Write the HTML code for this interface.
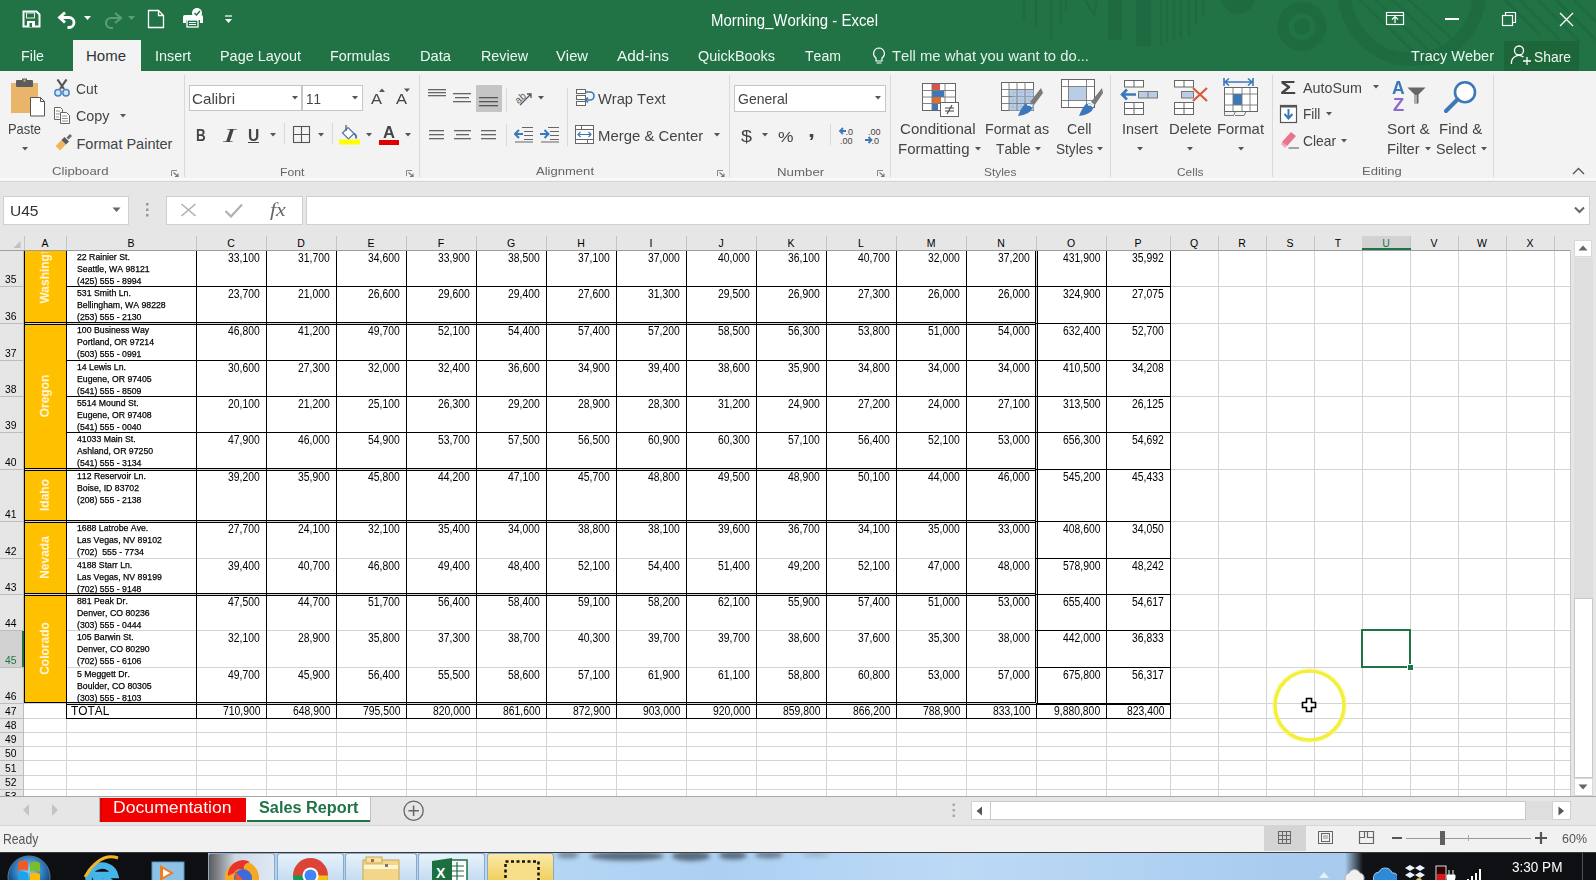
<!DOCTYPE html>
<html><head><meta charset="utf-8"><style>
html,body{margin:0;padding:0;}
body{width:1596px;height:880px;overflow:hidden;position:relative;background:#f3f3f3;font-family:"Liberation Sans", sans-serif;}
body div{position:absolute;}
</style></head><body>
<div style="left:0px;top:0px;width:1596px;height:71px;background:#217346;"></div>
<svg style="position:absolute;left:1000px;top:0px;" width="596" height="71" viewBox="0 0 596 71">
<g stroke="#1f6b41" fill="none">
<path d="M24 0 v19 M36 0 v28 M51 0 v39 M61 0 v24 M66 0 v11" stroke-width="2.2"/>
<path d="M85 0 L94 15 L97 0" stroke-width="2.2"/>
<path d="M161 0 v45 M167 0 v42 M174 0 v40 M181 0 v38 M189 0 v35 M196 0 v25 M203 0 v15" stroke-width="2.5"/>
<circle cx="302" cy="26.5" r="19" stroke-width="11"/>
<circle cx="412" cy="-8" r="67.5" stroke-width="13"/>
<path d="M360 0 L420 58 M372 -4 L436 58 M384 -8 L450 54 M398 -10 L462 48" stroke-width="2.5"/>
<path d="M505 0 L540 35 M520 0 L560 40 M538 0 L580 42 M556 0 L596 40 M574 0 L596 22" stroke-width="3"/>
</g>
<rect x="108" y="0" width="14" height="40" fill="#1f6b41"/>
<rect x="136" y="0" width="15" height="46" fill="#1f6b41"/>
<circle cx="238" cy="-3" r="17" fill="#1f6b41"/>
<circle cx="302" cy="26.5" r="8" fill="#1f6b41"/>
</svg>
<svg style="position:absolute;left:20px;top:9px;" width="22" height="20" viewBox="0 0 22 20"><path d="M3.5 2.5 h13 l3 3 v12 h-16 z" fill="none" stroke="#fff" stroke-width="2"/>
<rect x="6.5" y="4" width="8" height="5" fill="none" stroke="#e8f0ea" stroke-width="1"/>
<rect x="7" y="12" width="8" height="6" fill="#fff"/><rect x="9.5" y="14" width="2.5" height="4" fill="#217346"/></svg>
<svg style="position:absolute;left:56px;top:9px;" width="24" height="20" viewBox="0 0 24 20"><path d="M9 3.5 L3.5 8.5 L9 13.5" fill="none" stroke="#fff" stroke-width="2.8"/>
<path d="M4 8.5 H13 a5 5 0 0 1 0 10 h-1.5" fill="none" stroke="#fff" stroke-width="2.8"/></svg>
<svg style="position:absolute;left:84px;top:16px;" width="8" height="5" viewBox="0 0 8 5"><path d="M0 0 h7 l-3.5 4z" fill="#fff"/></svg>
<svg style="position:absolute;left:101px;top:9px;" width="22" height="20" viewBox="0 0 22 20"><path d="M14 4 L20 9 L14 14" fill="none" stroke="#5d9d78" stroke-width="2.2"/>
<path d="M19.5 9 H10 a5 5 0 0 0 0 10 h2" fill="none" stroke="#5d9d78" stroke-width="2.2"/></svg>
<svg style="position:absolute;left:128px;top:16px;" width="8" height="5" viewBox="0 0 8 5"><path d="M0 0 h7 l-3.5 4z" fill="#5d9d78"/></svg>
<svg style="position:absolute;left:147px;top:9px;" width="19" height="20" viewBox="0 0 19 20"><path d="M1.5 1.5 h10 l5 5 v12 h-15 z M11.5 1.5 v5 h5" fill="none" stroke="#fff" stroke-width="1.3"/></svg>
<svg style="position:absolute;left:182px;top:8px;" width="23" height="20" viewBox="0 0 23 20"><path d="M3 7 h16 a2 2 0 0 1 2 2 v6 h-3 v-3 h-14 v3 h-3 v-6 a2 2 0 0 1 2 -2z" fill="#fff"/>
<rect x="5" y="12" width="11" height="7" fill="none" stroke="#fff" stroke-width="1.3"/>
<path d="M7 14.5 h7 M7 16.5 h7" stroke="#fff" stroke-width="1"/>
<circle cx="15" cy="5" r="5" fill="#fff"/><path d="M12.5 5 l2 2 l3.5 -4" fill="none" stroke="#217346" stroke-width="1.5"/></svg>
<svg style="position:absolute;left:224px;top:15px;" width="9" height="10" viewBox="0 0 9 10"><path d="M1 1 h7" stroke="#fff" stroke-width="1.2"/><path d="M1 4 h7 l-3.5 4z" fill="#fff"/></svg>
<div style="left:711px;top:13.25px;font-size:16px;line-height:1;white-space:pre;color:#fff;font-weight:normal;font-kerning:none;transform:scaleX(0.9344);transform-origin:0 0;">Morning_Working - Excel</div>
<svg style="position:absolute;left:1385px;top:11px;" width="21" height="16" viewBox="0 0 21 16"><rect x="1.5" y="1.5" width="17" height="12" fill="none" stroke="#fff" stroke-width="1.2"/><path d="M1.5 4.5 h17" stroke="#fff"/><path d="M10 12 v-6 M7 8.5 l3 -3 l3 3" fill="none" stroke="#fff" stroke-width="1.2"/></svg>
<div style="left:1445px;top:18px;width:14px;height:1.5px;background:#fff;"></div>
<svg style="position:absolute;left:1501px;top:11px;" width="16" height="16" viewBox="0 0 16 16"><rect x="1.5" y="4.5" width="10" height="10" fill="none" stroke="#fff" stroke-width="1.2"/><path d="M4.5 4.5 v-3 h10 v10 h-3" fill="none" stroke="#fff" stroke-width="1.2"/></svg>
<svg style="position:absolute;left:1559px;top:12px;" width="15" height="15" viewBox="0 0 15 15"><path d="M1 1 L14 14 M14 1 L1 14" stroke="#fff" stroke-width="1.3"/></svg>
<div style="left:73px;top:40px;width:68px;height:31px;background:#f3f3f3;"></div>
<div style="left:21px;top:48.30px;font-size:15px;line-height:1;white-space:pre;color:#eef8f1;font-weight:normal;font-kerning:none;transform:scaleX(0.9516);transform-origin:0 0;">File</div>
<div style="left:86px;top:48.30px;font-size:15px;line-height:1;white-space:pre;color:#333;font-weight:normal;font-kerning:none;">Home</div>
<div style="left:155px;top:48.30px;font-size:15px;line-height:1;white-space:pre;color:#eef8f1;font-weight:normal;font-kerning:none;transform:scaleX(0.9596);transform-origin:0 0;">Insert</div>
<div style="left:220px;top:48.30px;font-size:15px;line-height:1;white-space:pre;color:#eef8f1;font-weight:normal;font-kerning:none;transform:scaleX(0.9616);transform-origin:0 0;">Page Layout</div>
<div style="left:330px;top:48.30px;font-size:15px;line-height:1;white-space:pre;color:#eef8f1;font-weight:normal;font-kerning:none;transform:scaleX(0.9598);transform-origin:0 0;">Formulas</div>
<div style="left:420px;top:48.30px;font-size:15px;line-height:1;white-space:pre;color:#eef8f1;font-weight:normal;font-kerning:none;transform:scaleX(0.9784);transform-origin:0 0;">Data</div>
<div style="left:481px;top:48.30px;font-size:15px;line-height:1;white-space:pre;color:#eef8f1;font-weight:normal;font-kerning:none;transform:scaleX(0.9556);transform-origin:0 0;">Review</div>
<div style="left:556px;top:48.30px;font-size:15px;line-height:1;white-space:pre;color:#eef8f1;font-weight:normal;font-kerning:none;transform:scaleX(0.9842);transform-origin:0 0;">View</div>
<div style="left:617px;top:48.30px;font-size:15px;line-height:1;white-space:pre;color:#eef8f1;font-weight:normal;font-kerning:none;transform:scaleX(1.0224);transform-origin:0 0;">Add-ins</div>
<div style="left:698px;top:48.30px;font-size:15px;line-height:1;white-space:pre;color:#eef8f1;font-weight:normal;font-kerning:none;transform:scaleX(0.9621);transform-origin:0 0;">QuickBooks</div>
<div style="left:805px;top:48.30px;font-size:15px;line-height:1;white-space:pre;color:#eef8f1;font-weight:normal;font-kerning:none;transform:scaleX(0.9389);transform-origin:0 0;">Team</div>
<svg style="position:absolute;left:871px;top:46px;" width="16" height="20" viewBox="0 0 16 20"><path d="M8 2 a5.5 5.5 0 0 0 -3 10 v3 h6 v-3 a5.5 5.5 0 0 0 -3 -10z M5.5 17 h5" fill="none" stroke="#fff" stroke-width="1.2"/></svg>
<div style="left:892px;top:48.30px;font-size:15px;line-height:1;white-space:pre;color:#e4f0e8;font-weight:normal;font-kerning:none;transform:scaleX(0.9886);transform-origin:0 0;">Tell me what you want to do...</div>
<div style="left:1411px;top:48.30px;font-size:15px;line-height:1;white-space:pre;color:#eef8f1;font-weight:normal;font-kerning:none;transform:scaleX(0.9668);transform-origin:0 0;">Tracy Weber</div>
<div style="left:1504px;top:41px;width:75px;height:30px;background:#1d663a;"></div>
<svg style="position:absolute;left:1510px;top:44px;" width="22" height="22" viewBox="0 0 22 22"><circle cx="9" cy="6.5" r="4.5" fill="none" stroke="#fff" stroke-width="1.3"/><path d="M1.5 20 a7.5 7.5 0 0 1 12 -7" fill="none" stroke="#fff" stroke-width="1.3"/><path d="M17 13 v8 M13 17 h8" stroke="#fff" stroke-width="1.3"/></svg>
<div style="left:1534px;top:49.30px;font-size:15px;line-height:1;white-space:pre;color:#eef8f1;font-weight:normal;font-kerning:none;transform:scaleX(0.9244);transform-origin:0 0;">Share</div>
<div style="left:0px;top:71px;width:1596px;height:111px;background:#f3f3f3;"></div>
<div style="left:0px;top:178px;width:1596px;height:2px;background:#fafafa;"></div>
<div style="left:0px;top:181px;width:1596px;height:1px;background:#d6d6d6;"></div>
<svg style="position:absolute;left:9px;top:78px;" width="38" height="40" viewBox="0 0 38 40"><rect x="2" y="5" width="27" height="30" fill="#e9b56a"/>
<rect x="7" y="2" width="17" height="7" fill="#5d5d5d" rx="1"/><rect x="13" y="0.5" width="5" height="3" fill="#5d5d5d"/><rect x="14.5" y="1.5" width="2" height="2" fill="#e9b56a"/>
<path d="M21.5 19.5 h10 l4 4 v14.5 h-14 z" fill="#fff" stroke="#555" stroke-width="1"/><path d="M31.5 19.5 v4 h4" fill="none" stroke="#555"/></svg>
<div style="left:8px;top:121.72px;font-size:14.5px;line-height:1;white-space:pre;color:#444444;font-weight:normal;font-kerning:none;transform:scaleX(0.8900);transform-origin:0 0;">Paste</div>
<svg style="position:absolute;left:22px;top:147px;" width="7" height="4" viewBox="0 0 7 4"><path d="M0 0 h6 l-3.0 3.5z" fill="#555"/></svg>
<svg style="position:absolute;left:53px;top:79px;" width="19" height="19" viewBox="0 0 19 19"><path d="M4.5 0.5 L11 10 M13.5 0.5 L7 10" stroke="#555" stroke-width="2.2" fill="none"/>
<circle cx="5" cy="13.8" r="3.2" fill="#d6e6f5" stroke="#4a86c6" stroke-width="1.5"/><circle cx="13" cy="13.8" r="3.2" fill="#d6e6f5" stroke="#4a86c6" stroke-width="1.5"/></svg>
<div style="left:76px;top:81.72px;font-size:14.5px;line-height:1;white-space:pre;color:#444444;font-weight:normal;font-kerning:none;transform:scaleX(0.9528);transform-origin:0 0;">Cut</div>
<svg style="position:absolute;left:53px;top:106px;" width="19" height="19" viewBox="0 0 19 19"><path d="M1.5 1.5 h6 l2 2 v10 h-8z" fill="#fff" stroke="#666" stroke-width="1"/>
<path d="M7.5 6.5 h6 l3 3 v8 h-9z" fill="#fff" stroke="#666" stroke-width="1"/>
<path d="M3 5h4 M3 8h4 M3 11h3 M9 10h5 M9 12.5h6 M9 15h6" stroke="#777" stroke-width="0.8"/></svg>
<div style="left:76px;top:109.22px;font-size:14.5px;line-height:1;white-space:pre;color:#444444;font-weight:normal;font-kerning:none;transform:scaleX(0.9897);transform-origin:0 0;">Copy</div>
<svg style="position:absolute;left:120px;top:114px;" width="7" height="4" viewBox="0 0 7 4"><path d="M0 0 h6 l-3.0 3.5z" fill="#555"/></svg>
<svg style="position:absolute;left:54px;top:134px;" width="19" height="18" viewBox="0 0 19 18"><path d="M1.5 12 L7.5 6 L12 10.5 L6 16.5z" fill="#f0b65c"/><path d="M7.5 6 L10.5 3 L15 7.5 L12 10.5z" fill="#5a5a5a"/><path d="M12.5 3.5 L16 0 L18 2 L14.5 5.5z" fill="#6a6a6a"/></svg>
<div style="left:76.5px;top:137.22px;font-size:14.5px;line-height:1;white-space:pre;color:#444444;font-weight:normal;font-kerning:none;">Format Painter</div>
<div style="left:51.5px;top:166.26px;font-size:11.5px;line-height:1;white-space:pre;color:#666666;font-weight:normal;font-kerning:none;transform:scaleX(1.1478);transform-origin:0 0;">Clipboard</div>
<svg style="position:absolute;left:171px;top:170px;" width="8" height="7" viewBox="0 0 8 7"><path d="M0.5 6 V0.5 H6" fill="none" stroke="#888" stroke-width="1"/><path d="M2.5 2.5 L6.5 6 M4 6.5 H7 V3.5" fill="none" stroke="#777" stroke-width="1.1"/></svg>
<div style="left:184px;top:75px;width:1px;height:102px;background:#d9d9d9;"></div>
<div style="left:189px;top:85px;width:113px;height:26px;background:#fff;box-sizing:border-box;border:1px solid #c6c6c6;"></div>
<div style="left:302px;top:85px;width:61px;height:26px;background:#fff;box-sizing:border-box;border:1px solid #c6c6c6;"></div>
<div style="left:192px;top:91.72px;font-size:14.5px;line-height:1;white-space:pre;color:#444444;font-weight:normal;font-kerning:none;transform:scaleX(1.0464);transform-origin:0 0;">Calibri</div>
<svg style="position:absolute;left:292px;top:96px;" width="7" height="4" viewBox="0 0 7 4"><path d="M0 0 h6 l-3.0 3.5z" fill="#555"/></svg>
<div style="left:306px;top:91.72px;font-size:14.5px;line-height:1;white-space:pre;color:#444444;font-weight:normal;font-kerning:none;transform:scaleX(0.9300);transform-origin:0 0;">11</div>
<svg style="position:absolute;left:351.5px;top:96px;" width="7" height="4" viewBox="0 0 7 4"><path d="M0 0 h6 l-3.0 3.5z" fill="#555"/></svg>
<div style="left:371px;top:92.15px;font-size:14px;line-height:1;white-space:pre;color:#444444;font-weight:normal;font-kerning:none;transform:scaleX(1.1780);transform-origin:0 0;">A</div>
<svg style="position:absolute;left:379px;top:88px;" width="7" height="5" viewBox="0 0 7 5"><path d="M0 4 h6 l-3 -3.5z" fill="#555"/></svg>
<div style="left:396px;top:92.15px;font-size:14px;line-height:1;white-space:pre;color:#444444;font-weight:normal;font-kerning:none;transform:scaleX(1.1780);transform-origin:0 0;">A</div>
<svg style="position:absolute;left:404px;top:88px;" width="7" height="5" viewBox="0 0 7 5"><path d="M0 0.5 h6 l-3 3.5z" fill="#555"/></svg>
<div style="left:196.3px;top:127.15px;font-size:17.3px;line-height:1;white-space:pre;color:#444;font-weight:bold;font-kerning:none;transform:scaleX(0.7764);transform-origin:0 0;">B</div>
<div style="left:222.5px;top:126.56px;font-size:18px;line-height:1;white-space:pre;color:#444;font-weight:normal;font-kerning:none;transform:scaleX(2.0996);transform-origin:0 0;font-style:italic;font-family:'Liberation Serif',serif;">I</div>
<div style="left:247.5px;top:127.15px;font-size:17.3px;line-height:1;white-space:pre;color:#444;font-weight:bold;font-kerning:none;transform:scaleX(0.9045);transform-origin:0 0;">U</div>
<div style="left:248px;top:142.3px;width:11px;height:1.2px;background:#444;"></div>
<svg style="position:absolute;left:270px;top:133px;" width="7" height="4" viewBox="0 0 7 4"><path d="M0 0 h6 l-3.0 3.5z" fill="#555"/></svg>
<div style="left:284px;top:123px;width:1px;height:21px;background:#d9d9d9;"></div>
<svg style="position:absolute;left:292px;top:125px;" width="19" height="19" viewBox="0 0 19 19"><rect x="1.5" y="1.5" width="16" height="16" fill="none" stroke="#555" stroke-width="1.1"/><path d="M9.5 1.5 v16 M1.5 9.5 h16" stroke="#555" stroke-width="1.1"/></svg>
<svg style="position:absolute;left:318px;top:133px;" width="7" height="4" viewBox="0 0 7 4"><path d="M0 0 h6 l-3.0 3.5z" fill="#555"/></svg>
<div style="left:332px;top:123px;width:1px;height:21px;background:#d9d9d9;"></div>
<svg style="position:absolute;left:338px;top:124px;" width="24" height="22" viewBox="0 0 24 22"><path d="M4.5 9 L10 3.5 L16 9.5 L10.5 15z" fill="#fff" stroke="#4e72b0" stroke-width="1.2"/>
<path d="M8 1 v6" stroke="#555" stroke-width="1.2"/><path d="M16 9.5 q3 2 2 5" fill="none" stroke="#4e72b0" stroke-width="1.8"/>
<rect x="1" y="15.5" width="21" height="5" fill="#ffff00"/></svg>
<svg style="position:absolute;left:366px;top:133px;" width="7" height="4" viewBox="0 0 7 4"><path d="M0 0 h6 l-3.0 3.5z" fill="#555"/></svg>
<div style="left:383px;top:124.95px;font-size:16px;line-height:1;white-space:pre;color:#444;font-weight:bold;font-kerning:none;transform:scaleX(1.0385);transform-origin:0 0;">A</div>
<div style="left:379px;top:140px;width:20px;height:4.5px;background:#e00000;"></div>
<svg style="position:absolute;left:405px;top:133px;" width="7" height="4" viewBox="0 0 7 4"><path d="M0 0 h6 l-3.0 3.5z" fill="#555"/></svg>
<div style="left:280px;top:166.76px;font-size:11.5px;line-height:1;white-space:pre;color:#666666;font-weight:normal;font-kerning:none;transform:scaleX(1.0647);transform-origin:0 0;">Font</div>
<svg style="position:absolute;left:406px;top:170px;" width="8" height="7" viewBox="0 0 8 7"><path d="M0.5 6 V0.5 H6" fill="none" stroke="#888" stroke-width="1"/><path d="M2.5 2.5 L6.5 6 M4 6.5 H7 V3.5" fill="none" stroke="#777" stroke-width="1.1"/></svg>
<div style="left:419px;top:75px;width:1px;height:102px;background:#d9d9d9;"></div>
<svg style="position:absolute;left:428px;top:88px;" width="19" height="10" viewBox="0 0 19 10"><rect x="0" y="1" width="18" height="1.3" fill="#666"/><rect x="0" y="4" width="18" height="1.3" fill="#666"/><rect x="0" y="7" width="18" height="1.3" fill="#666"/></svg>
<svg style="position:absolute;left:453px;top:92px;" width="19" height="12" viewBox="0 0 19 12"><rect x="0" y="1" width="18" height="1.3" fill="#666"/><rect x="2" y="5" width="14" height="1.3" fill="#666"/><rect x="0" y="9" width="18" height="1.3" fill="#666"/></svg>
<div style="left:476px;top:85px;width:26px;height:27px;background:#c5c5c5;"></div>
<svg style="position:absolute;left:479px;top:96px;" width="20" height="12" viewBox="0 0 20 12"><rect x="0" y="1" width="19" height="1.3" fill="#555"/><rect x="0" y="5" width="19" height="1.3" fill="#555"/><rect x="0" y="9" width="19" height="1.3" fill="#555"/></svg>
<div style="left:506px;top:88px;width:1px;height:24px;background:#d9d9d9;"></div>
<svg style="position:absolute;left:513px;top:88px;" width="33" height="19" viewBox="0 0 33 19"><text x="2" y="13" font-size="10" fill="#555" font-family="Liberation Sans" transform="rotate(-40 8 10)">ab</text>
<path d="M7 17 L18 6 M14 6 h4 v4" fill="none" stroke="#555" stroke-width="1.3"/></svg>
<svg style="position:absolute;left:538px;top:96px;" width="7" height="4" viewBox="0 0 7 4"><path d="M0 0 h6 l-3.0 3.5z" fill="#555"/></svg>
<div style="left:567px;top:88px;width:1px;height:58px;background:#d9d9d9;"></div>
<svg style="position:absolute;left:575px;top:88px;" width="21" height="20" viewBox="0 0 21 20"><rect x="1.5" y="1.5" width="9" height="4" fill="#fff" stroke="#666"/><rect x="1.5" y="7.5" width="9" height="4" fill="#fff" stroke="#666"/><rect x="1.5" y="13.5" width="9" height="4" fill="#fff" stroke="#666"/>
<path d="M11 4 h4 a4 4 0 0 1 0 8 h-4" fill="none" stroke="#3c78b9" stroke-width="1.6"/><path d="M13 9.5 l-2.5 2.5 l2.5 2.5" fill="none" stroke="#3c78b9" stroke-width="1.6"/></svg>
<div style="left:598.4px;top:91.72px;font-size:14.5px;line-height:1;white-space:pre;color:#444444;font-weight:normal;font-kerning:none;transform:scaleX(1.0109);transform-origin:0 0;">Wrap Text</div>
<svg style="position:absolute;left:429px;top:129px;" width="16" height="12" viewBox="0 0 16 12"><rect x="0" y="1" width="15" height="1.3" fill="#666"/><rect x="0" y="5" width="15" height="1.3" fill="#666"/><rect x="0" y="9" width="15" height="1.3" fill="#666"/></svg>
<svg style="position:absolute;left:454px;top:129px;" width="18" height="12" viewBox="0 0 18 12"><rect x="0" y="1" width="17" height="1.3" fill="#666"/><rect x="2" y="5" width="13" height="1.3" fill="#666"/><rect x="0" y="9" width="17" height="1.3" fill="#666"/></svg>
<svg style="position:absolute;left:481px;top:129px;" width="16" height="12" viewBox="0 0 16 12"><rect x="0" y="1" width="15" height="1.3" fill="#666"/><rect x="0" y="5" width="15" height="1.3" fill="#666"/><rect x="0" y="9" width="15" height="1.3" fill="#666"/></svg>
<div style="left:506px;top:124px;width:1px;height:22px;background:#d9d9d9;"></div>
<svg style="position:absolute;left:514px;top:126px;" width="20" height="17" viewBox="0 0 20 17"><path d="M8 1.5 h11 M10 5.5 h9 M10 9.5 h9 M10 13.5 h9 M1 16 h18" stroke="#666" stroke-width="1.2"/><path d="M1 8 h8 M5 4 l-4 4 l4 4" fill="none" stroke="#3c78b9" stroke-width="2"/></svg>
<svg style="position:absolute;left:540px;top:126px;" width="20" height="17" viewBox="0 0 20 17"><path d="M8 1.5 h11 M10 5.5 h9 M10 9.5 h9 M10 13.5 h9 M1 16 h18" stroke="#666" stroke-width="1.2"/><path d="M0 8 h8 M4.5 4 l4 4 l-4 4" fill="none" stroke="#3c78b9" stroke-width="2"/></svg>
<svg style="position:absolute;left:574px;top:124px;" width="21" height="21" viewBox="0 0 21 21"><rect x="1.5" y="1.5" width="18" height="18" fill="#fff" stroke="#666"/><path d="M1.5 5.5 h18 M1.5 15.5 h18 M7.5 1.5 v4 M13.5 15.5 v4" stroke="#666"/>
<path d="M4 10.5 h13 M6.5 8 l-2.5 2.5 l2.5 2.5 M14.5 8 l2.5 2.5 l-2.5 2.5" fill="none" stroke="#3c78b9" stroke-width="1.2"/></svg>
<div style="left:598.4px;top:128.72px;font-size:14.5px;line-height:1;white-space:pre;color:#444444;font-weight:normal;font-kerning:none;transform:scaleX(1.0278);transform-origin:0 0;">Merge &amp; Center</div>
<svg style="position:absolute;left:713.5px;top:133px;" width="7" height="4" viewBox="0 0 7 4"><path d="M0 0 h6 l-3.0 3.5z" fill="#555"/></svg>
<div style="left:536px;top:166.46px;font-size:11.5px;line-height:1;white-space:pre;color:#666666;font-weight:normal;font-kerning:none;transform:scaleX(1.1342);transform-origin:0 0;">Alignment</div>
<svg style="position:absolute;left:717px;top:170px;" width="8" height="7" viewBox="0 0 8 7"><path d="M0.5 6 V0.5 H6" fill="none" stroke="#888" stroke-width="1"/><path d="M2.5 2.5 L6.5 6 M4 6.5 H7 V3.5" fill="none" stroke="#777" stroke-width="1.1"/></svg>
<div style="left:729px;top:75px;width:1px;height:102px;background:#d9d9d9;"></div>
<div style="left:734px;top:85px;width:152px;height:27px;background:#fff;box-sizing:border-box;border:1px solid #c6c6c6;"></div>
<div style="left:737.5px;top:91.72px;font-size:14.5px;line-height:1;white-space:pre;color:#444444;font-weight:normal;font-kerning:none;transform:scaleX(0.9654);transform-origin:0 0;">General</div>
<svg style="position:absolute;left:875px;top:96px;" width="7" height="4" viewBox="0 0 7 4"><path d="M0 0 h6 l-3.0 3.5z" fill="#555"/></svg>
<div style="left:741px;top:127.61px;font-size:17px;line-height:1;white-space:pre;color:#444;font-weight:normal;font-kerning:none;transform:scaleX(1.1635);transform-origin:0 0;">$</div>
<svg style="position:absolute;left:762px;top:133px;" width="7" height="4" viewBox="0 0 7 4"><path d="M0 0 h6 l-3.0 3.5z" fill="#555"/></svg>
<div style="left:778px;top:129.30px;font-size:15px;line-height:1;white-space:pre;color:#444;font-weight:normal;font-kerning:none;transform:scaleX(1.1621);transform-origin:0 0;">%</div>
<div style="left:808px;top:120.07px;font-size:20px;line-height:1;white-space:pre;color:#444;font-weight:bold;font-kerning:none;transform:scaleX(1.2598);transform-origin:0 0;">,</div>
<div style="left:829.5px;top:124px;width:1px;height:21px;background:#d9d9d9;"></div>
<svg style="position:absolute;left:838px;top:125px;" width="18" height="20" viewBox="0 0 18 20"><path d="M2 6 h6 M5 3 l-3 3 l3 3" fill="none" stroke="#3c78b9" stroke-width="1.8"/>
<text x="7.5" y="9.5" font-size="9" fill="#444" font-family="Liberation Sans">.0</text><text x="2" y="18.5" font-size="9" fill="#444" font-family="Liberation Sans">.00</text></svg>
<svg style="position:absolute;left:864px;top:125px;" width="18" height="20" viewBox="0 0 18 20"><path d="M1 15 h6 M4.5 12 l3 3 l-3 3" fill="none" stroke="#3c78b9" stroke-width="1.8"/>
<text x="4" y="9.5" font-size="9" fill="#444" font-family="Liberation Sans">.00</text><text x="7.5" y="18.5" font-size="9" fill="#444" font-family="Liberation Sans">.0</text></svg>
<div style="left:776.6px;top:166.96px;font-size:11.5px;line-height:1;white-space:pre;color:#666666;font-weight:normal;font-kerning:none;transform:scaleX(1.1540);transform-origin:0 0;">Number</div>
<svg style="position:absolute;left:877px;top:170px;" width="8" height="7" viewBox="0 0 8 7"><path d="M0.5 6 V0.5 H6" fill="none" stroke="#888" stroke-width="1"/><path d="M2.5 2.5 L6.5 6 M4 6.5 H7 V3.5" fill="none" stroke="#777" stroke-width="1.1"/></svg>
<div style="left:890px;top:75px;width:1px;height:102px;background:#d9d9d9;"></div>
<svg style="position:absolute;left:920px;top:82px;" width="41" height="36" viewBox="0 0 41 36"><g stroke="#666" stroke-width="1" fill="#fff"><rect x="2.5" y="1.5" width="33" height="27"/></g>
<rect x="12" y="2" width="8" height="6.5" fill="#d9534f"/><rect x="12" y="8.5" width="12" height="6.5" fill="#3c78b9"/><rect x="12" y="15" width="9" height="6.5" fill="#e46c2e"/><rect x="12" y="21.5" width="6" height="6.5" fill="#3c78b9"/>
<path d="M12 1.5 v27 M25 1.5 v27 M2.5 8.5 h33 M2.5 15 h33 M2.5 21.5 h33" stroke="#777" stroke-width="0.9"/>
<rect x="20.5" y="20.5" width="18" height="14" fill="#fff" stroke="#666"/>
<path d="M25 26 h9 M25 29 h9 M32 23 l-5 9" stroke="#444" stroke-width="1.1"/></svg>
<div style="left:900.4px;top:122.42px;font-size:14.5px;line-height:1;white-space:pre;color:#444444;font-weight:normal;font-kerning:none;transform:scaleX(1.0420);transform-origin:0 0;">Conditional</div>
<div style="left:897.5px;top:142.22px;font-size:14.5px;line-height:1;white-space:pre;color:#444444;font-weight:normal;font-kerning:none;transform:scaleX(1.0317);transform-origin:0 0;">Formatting</div>
<svg style="position:absolute;left:974.5px;top:147px;" width="7" height="4" viewBox="0 0 7 4"><path d="M0 0 h6 l-3.0 3.5z" fill="#555"/></svg>
<svg style="position:absolute;left:999px;top:80px;" width="45" height="38" viewBox="0 0 45 38"><rect x="2.5" y="2.5" width="32" height="28" fill="#fff" stroke="#666"/>
<rect x="10" y="9.5" width="24.5" height="21" fill="#b9cde6"/>
<path d="M10 2.5 v28 M18 2.5 v28 M26 2.5 v28 M2.5 9.5 h32 M2.5 16.5 h32 M2.5 23.5 h32" stroke="#777" stroke-width="0.9"/>
<path d="M14 16.5 h20 M14 12.5 h20 M22 9.5 v21 M30 9.5 v21 M14 9.5 v21 M10 20 h24.5 M10 27 h24.5" stroke="#9fb5d3" stroke-width="0.6"/>
<path d="M42 8 L31 22 L35 25 L44 13z" fill="#7a7a7a"/>
<path d="M26 24 q6 -2 8 3 q-3 8 -15 9 q3 -8 7 -12z" fill="#3c78b9"/><path d="M28 25 q4 -1 5 2" stroke="#fff" fill="none" stroke-width="1.5"/></svg>
<div style="left:985.4px;top:122.42px;font-size:14.5px;line-height:1;white-space:pre;color:#444444;font-weight:normal;font-kerning:none;transform:scaleX(0.9822);transform-origin:0 0;">Format as</div>
<div style="left:995.5px;top:142.22px;font-size:14.5px;line-height:1;white-space:pre;color:#444444;font-weight:normal;font-kerning:none;transform:scaleX(0.9512);transform-origin:0 0;">Table</div>
<svg style="position:absolute;left:1035px;top:147px;" width="7" height="4" viewBox="0 0 7 4"><path d="M0 0 h6 l-3.0 3.5z" fill="#555"/></svg>
<svg style="position:absolute;left:1059px;top:78px;" width="45" height="40" viewBox="0 0 45 40"><rect x="2.5" y="1.5" width="33" height="28" fill="#fff" stroke="#666"/>
<rect x="9.5" y="8.5" width="18" height="14" fill="#b9cde6"/>
<path d="M9.5 1.5 v28 M27.5 1.5 v28 M2.5 8.5 h33 M2.5 22.5 h33" stroke="#777" stroke-width="0.9"/>
<path d="M43 10 L32 24 L36 27 L44 15z" fill="#7a7a7a"/>
<path d="M27 26 q6 -2 8 3 q-3 8 -15 9 q3 -8 7 -12z" fill="#3c78b9"/><path d="M29 27 q4 -1 5 2" stroke="#fff" fill="none" stroke-width="1.5"/></svg>
<div style="left:1066.8px;top:122.42px;font-size:14.5px;line-height:1;white-space:pre;color:#444444;font-weight:normal;font-kerning:none;transform:scaleX(0.9808);transform-origin:0 0;">Cell</div>
<div style="left:1055.7px;top:142.22px;font-size:14.5px;line-height:1;white-space:pre;color:#444444;font-weight:normal;font-kerning:none;transform:scaleX(0.9396);transform-origin:0 0;">Styles</div>
<svg style="position:absolute;left:1097px;top:147px;" width="7" height="4" viewBox="0 0 7 4"><path d="M0 0 h6 l-3.0 3.5z" fill="#555"/></svg>
<div style="left:984px;top:166.76px;font-size:11.5px;line-height:1;white-space:pre;color:#666666;font-weight:normal;font-kerning:none;transform:scaleX(1.0346);transform-origin:0 0;">Styles</div>
<div style="left:1110px;top:75px;width:1px;height:102px;background:#d9d9d9;"></div>
<svg style="position:absolute;left:1119px;top:78px;" width="40" height="38" viewBox="0 0 40 38"><g fill="#fff" stroke="#666"><rect x="5.5" y="2.5" width="19" height="6.5"/><rect x="5.5" y="24.5" width="19" height="12"/></g>
<path d="M15 2.5 v6.5 M15 24.5 v12 M5.5 30.5 h19" stroke="#666"/>
<rect x="19.5" y="13.5" width="19" height="6.5" fill="#b9cde6" stroke="#777"/><path d="M29 13.5 v6.5" stroke="#777"/>
<path d="M3 16.5 h14 M8 11.5 l-5 5 l5 5" fill="none" stroke="#3c78b9" stroke-width="2.5"/></svg>
<div style="left:1122px;top:122.22px;font-size:14.5px;line-height:1;white-space:pre;color:#444444;font-weight:normal;font-kerning:none;transform:scaleX(0.9927);transform-origin:0 0;">Insert</div>
<svg style="position:absolute;left:1137px;top:147px;" width="7" height="4" viewBox="0 0 7 4"><path d="M0 0 h6 l-3.0 3.5z" fill="#555"/></svg>
<svg style="position:absolute;left:1172px;top:78px;" width="40" height="38" viewBox="0 0 40 38"><g fill="#fff" stroke="#666"><rect x="2.5" y="2.5" width="19" height="6.5"/><rect x="2.5" y="24.5" width="19" height="12"/></g>
<path d="M12 2.5 v6.5 M12 24.5 v12 M2.5 30.5 h19" stroke="#666"/>
<rect x="9.5" y="13.5" width="12" height="6.5" fill="#b9cde6" stroke="#777"/>
<path d="M21 10 L35 23 M35 10 L21 23" stroke="#d9573c" stroke-width="2.2"/></svg>
<div style="left:1168.8px;top:122.22px;font-size:14.5px;line-height:1;white-space:pre;color:#444444;font-weight:normal;font-kerning:none;transform:scaleX(1.0211);transform-origin:0 0;">Delete</div>
<svg style="position:absolute;left:1187px;top:147px;" width="7" height="4" viewBox="0 0 7 4"><path d="M0 0 h6 l-3.0 3.5z" fill="#555"/></svg>
<svg style="position:absolute;left:1222px;top:77px;" width="38" height="40" viewBox="0 0 38 40"><path d="M3 5 h27 M7 1.5 l-4 3.5 l4 3.5 M26 1.5 l4 3.5 l-4 3.5 M2 1 v8 M31 1 v8" fill="none" stroke="#3c78b9" stroke-width="1.6"/>
<rect x="2.5" y="10.5" width="33" height="24" fill="#fff" stroke="#666"/>
<rect x="11" y="17" width="9" height="11" fill="#3c78b9"/>
<path d="M11 10.5 v24 M20 10.5 v24 M28 10.5 v24 M2.5 17 h33 M2.5 28 h33" stroke="#777" stroke-width="0.9"/>
<path d="M2.5 34.5 v4 h9 l2 -4 M13 38.5 h9 l2 -4" fill="none" stroke="#777"/></svg>
<div style="left:1217px;top:122.22px;font-size:14.5px;line-height:1;white-space:pre;color:#444444;font-weight:normal;font-kerning:none;transform:scaleX(1.0235);transform-origin:0 0;">Format</div>
<svg style="position:absolute;left:1237.5px;top:147px;" width="7" height="4" viewBox="0 0 7 4"><path d="M0 0 h6 l-3.0 3.5z" fill="#555"/></svg>
<div style="left:1177px;top:166.66px;font-size:11.5px;line-height:1;white-space:pre;color:#666666;font-weight:normal;font-kerning:none;transform:scaleX(1.0368);transform-origin:0 0;">Cells</div>
<div style="left:1271.5px;top:75px;width:1px;height:102px;background:#d9d9d9;"></div>
<div style="left:1280px;top:78.41px;font-size:19px;line-height:1;white-space:pre;color:#444;font-weight:bold;font-kerning:none;transform:scaleX(1.4033);transform-origin:0 0;">Σ</div>
<div style="left:1303px;top:80.72px;font-size:14.5px;line-height:1;white-space:pre;color:#444444;font-weight:normal;font-kerning:none;transform:scaleX(0.9892);transform-origin:0 0;">AutoSum</div>
<svg style="position:absolute;left:1373px;top:85px;" width="7" height="4" viewBox="0 0 7 4"><path d="M0 0 h6 l-3.0 3.5z" fill="#555"/></svg>
<svg style="position:absolute;left:1279px;top:104px;" width="19" height="20" viewBox="0 0 19 20"><rect x="1.5" y="1.5" width="16" height="17" fill="#fff" stroke="#555" stroke-width="1.2"/><rect x="1.5" y="1.5" width="16" height="2" fill="#555"/>
<path d="M9.5 5 v9 M5.5 10 l4 4.5 l4 -4.5" fill="none" stroke="#3c78b9" stroke-width="2"/></svg>
<div style="left:1303px;top:107.22px;font-size:14.5px;line-height:1;white-space:pre;color:#444444;font-weight:normal;font-kerning:none;transform:scaleX(0.9394);transform-origin:0 0;">Fill</div>
<svg style="position:absolute;left:1325.5px;top:112px;" width="7" height="4" viewBox="0 0 7 4"><path d="M0 0 h6 l-3.0 3.5z" fill="#555"/></svg>
<svg style="position:absolute;left:1280px;top:130px;" width="20" height="20" viewBox="0 0 20 20"><path d="M2 12 L11 2 L16 6 L7 16z" fill="#e8738f"/><path d="M2 12 L7 16 L5 18 L1 14z" fill="#f2a6b8"/><path d="M8.5 18 h10.5" stroke="#555" stroke-width="1"/></svg>
<div style="left:1303px;top:133.92px;font-size:14.5px;line-height:1;white-space:pre;color:#444444;font-weight:normal;font-kerning:none;transform:scaleX(0.9524);transform-origin:0 0;">Clear</div>
<svg style="position:absolute;left:1340.5px;top:139px;" width="7" height="4" viewBox="0 0 7 4"><path d="M0 0 h6 l-3.0 3.5z" fill="#555"/></svg>
<div style="left:1392px;top:79.06px;font-size:18px;line-height:1;white-space:pre;color:#3c78b9;font-weight:bold;font-kerning:none;transform:scaleX(0.9770);transform-origin:0 0;">A</div>
<div style="left:1392.5px;top:96.36px;font-size:18px;line-height:1;white-space:pre;color:#8e6ad0;font-weight:bold;font-kerning:none;transform:scaleX(1.0186);transform-origin:0 0;">Z</div>
<svg style="position:absolute;left:1407px;top:87px;" width="20" height="18" viewBox="0 0 20 18"><path d="M0.5 0.5 h18 l-7 7 v9 h-4 v-9z" fill="#666"/><path d="M9 8 v8" stroke="#f3f3f3" stroke-width="1"/></svg>
<div style="left:1387.4px;top:122.42px;font-size:14.5px;line-height:1;white-space:pre;color:#444444;font-weight:normal;font-kerning:none;transform:scaleX(1.0573);transform-origin:0 0;">Sort &amp;</div>
<div style="left:1387.4px;top:142.22px;font-size:14.5px;line-height:1;white-space:pre;color:#444444;font-weight:normal;font-kerning:none;transform:scaleX(1.0117);transform-origin:0 0;">Filter</div>
<svg style="position:absolute;left:1424.5px;top:147px;" width="7" height="4" viewBox="0 0 7 4"><path d="M0 0 h6 l-3.0 3.5z" fill="#555"/></svg>
<svg style="position:absolute;left:1441px;top:78px;" width="38" height="38" viewBox="0 0 38 38"><circle cx="24" cy="14.2" r="10" fill="#fff" stroke="#3c78b9" stroke-width="2.6"/><path d="M16.5 21.5 L5 33" stroke="#3c78b9" stroke-width="4" stroke-linecap="round"/></svg>
<div style="left:1439.3px;top:122.42px;font-size:14.5px;line-height:1;white-space:pre;color:#444444;font-weight:normal;font-kerning:none;transform:scaleX(1.0309);transform-origin:0 0;">Find &amp;</div>
<div style="left:1436.4px;top:142.22px;font-size:14.5px;line-height:1;white-space:pre;color:#444444;font-weight:normal;font-kerning:none;transform:scaleX(0.9826);transform-origin:0 0;">Select</div>
<svg style="position:absolute;left:1480.5px;top:147px;" width="7" height="4" viewBox="0 0 7 4"><path d="M0 0 h6 l-3.0 3.5z" fill="#555"/></svg>
<div style="left:1362px;top:166.26px;font-size:11.5px;line-height:1;white-space:pre;color:#666666;font-weight:normal;font-kerning:none;transform:scaleX(1.1319);transform-origin:0 0;">Editing</div>
<div style="left:1493px;top:75px;width:1px;height:102px;background:#d9d9d9;"></div>
<svg style="position:absolute;left:1572px;top:167px;" width="13" height="8" viewBox="0 0 13 8"><path d="M1 7 L6.5 1.5 L12 7" fill="none" stroke="#555" stroke-width="1.4"/></svg>
<div style="left:0px;top:182px;width:1596px;height:614px;background:#e6e6e6;"></div>
<div style="left:3px;top:196px;width:126px;height:29px;background:#fff;box-sizing:border-box;border:1px solid #d0d0d0;"></div>
<div style="left:10px;top:203.00px;font-size:15px;line-height:1;white-space:pre;color:#333;font-weight:normal;font-kerning:none;transform:scaleX(1.0357);transform-origin:0 0;">U45</div>
<svg style="position:absolute;left:112px;top:207px;" width="9" height="6" viewBox="0 0 9 6"><path d="M0.5 0.5 h8 l-4 4.5z" fill="#666"/></svg>
<svg style="position:absolute;left:145px;top:202px;" width="5" height="16" viewBox="0 0 5 16"><rect x="1" y="1" width="2.5" height="2.5" fill="#999"/><rect x="1" y="6.5" width="2.5" height="2.5" fill="#999"/><rect x="1" y="12" width="2.5" height="2.5" fill="#999"/></svg>
<div style="left:166px;top:196px;width:137px;height:29px;background:#fff;box-sizing:border-box;border:1px solid #d0d0d0;"></div>
<svg style="position:absolute;left:180px;top:203px;" width="17" height="14" viewBox="0 0 17 14"><path d="M1.5 1 L15.5 13 M15.5 1 L1.5 13" stroke="#b0b0b0" stroke-width="1.6"/></svg>
<svg style="position:absolute;left:224px;top:203px;" width="20" height="15" viewBox="0 0 20 15"><path d="M1.5 8 L7 13.5 L18 1.5" fill="none" stroke="#b0b0b0" stroke-width="2.2"/></svg>
<div style="left:270px;top:200.76px;font-size:18px;line-height:1;white-space:pre;color:#666;font-weight:normal;font-kerning:none;transform:scaleX(1.2142);transform-origin:0 0;font-family:'Liberation Serif',serif;font-style:italic;">fx</div>
<div style="left:306px;top:196px;width:1284px;height:29px;background:#fff;box-sizing:border-box;border:1px solid #d0d0d0;"></div>
<svg style="position:absolute;left:1574px;top:206px;" width="11" height="8" viewBox="0 0 11 8"><path d="M1 1.5 L5.5 6 L10 1.5" fill="none" stroke="#666" stroke-width="2"/></svg>
<div style="left:24px;top:250px;width:1546px;height:546px;background:#fff;"></div>
<div style="left:66px;top:250px;width:1px;height:546px;background:#d4d4d4;"></div>
<div style="left:196px;top:250px;width:1px;height:546px;background:#d4d4d4;"></div>
<div style="left:266px;top:250px;width:1px;height:546px;background:#d4d4d4;"></div>
<div style="left:336px;top:250px;width:1px;height:546px;background:#d4d4d4;"></div>
<div style="left:406px;top:250px;width:1px;height:546px;background:#d4d4d4;"></div>
<div style="left:476px;top:250px;width:1px;height:546px;background:#d4d4d4;"></div>
<div style="left:546px;top:250px;width:1px;height:546px;background:#d4d4d4;"></div>
<div style="left:616px;top:250px;width:1px;height:546px;background:#d4d4d4;"></div>
<div style="left:686px;top:250px;width:1px;height:546px;background:#d4d4d4;"></div>
<div style="left:756px;top:250px;width:1px;height:546px;background:#d4d4d4;"></div>
<div style="left:826px;top:250px;width:1px;height:546px;background:#d4d4d4;"></div>
<div style="left:896px;top:250px;width:1px;height:546px;background:#d4d4d4;"></div>
<div style="left:966px;top:250px;width:1px;height:546px;background:#d4d4d4;"></div>
<div style="left:1036px;top:250px;width:1px;height:546px;background:#d4d4d4;"></div>
<div style="left:1106px;top:250px;width:1px;height:546px;background:#d4d4d4;"></div>
<div style="left:1170px;top:250px;width:1px;height:546px;background:#d4d4d4;"></div>
<div style="left:1218px;top:250px;width:1px;height:546px;background:#d4d4d4;"></div>
<div style="left:1266px;top:250px;width:1px;height:546px;background:#d4d4d4;"></div>
<div style="left:1314px;top:250px;width:1px;height:546px;background:#d4d4d4;"></div>
<div style="left:1362px;top:250px;width:1px;height:546px;background:#d4d4d4;"></div>
<div style="left:1410px;top:250px;width:1px;height:546px;background:#d4d4d4;"></div>
<div style="left:1458px;top:250px;width:1px;height:546px;background:#d4d4d4;"></div>
<div style="left:1506px;top:250px;width:1px;height:546px;background:#d4d4d4;"></div>
<div style="left:1554px;top:250px;width:1px;height:546px;background:#d4d4d4;"></div>
<div style="left:1570px;top:250px;width:1px;height:546px;background:#c8c8c8;"></div>
<div style="left:24px;top:286px;width:1546px;height:1px;background:#d4d4d4;"></div>
<div style="left:24px;top:323px;width:1546px;height:1px;background:#d4d4d4;"></div>
<div style="left:24px;top:360px;width:1546px;height:1px;background:#d4d4d4;"></div>
<div style="left:24px;top:396px;width:1546px;height:1px;background:#d4d4d4;"></div>
<div style="left:24px;top:432px;width:1546px;height:1px;background:#d4d4d4;"></div>
<div style="left:24px;top:469px;width:1546px;height:1px;background:#d4d4d4;"></div>
<div style="left:24px;top:521px;width:1546px;height:1px;background:#d4d4d4;"></div>
<div style="left:24px;top:558px;width:1546px;height:1px;background:#d4d4d4;"></div>
<div style="left:24px;top:594px;width:1546px;height:1px;background:#d4d4d4;"></div>
<div style="left:24px;top:630px;width:1546px;height:1px;background:#d4d4d4;"></div>
<div style="left:24px;top:667px;width:1546px;height:1px;background:#d4d4d4;"></div>
<div style="left:24px;top:703px;width:1546px;height:1px;background:#d4d4d4;"></div>
<div style="left:24px;top:718px;width:1546px;height:1px;background:#d4d4d4;"></div>
<div style="left:24px;top:732px;width:1546px;height:1px;background:#d4d4d4;"></div>
<div style="left:24px;top:746px;width:1546px;height:1px;background:#d4d4d4;"></div>
<div style="left:24px;top:760px;width:1546px;height:1px;background:#d4d4d4;"></div>
<div style="left:24px;top:775px;width:1546px;height:1px;background:#d4d4d4;"></div>
<div style="left:24px;top:789px;width:1546px;height:1px;background:#d4d4d4;"></div>
<div style="left:25px;top:250px;width:41px;height:72px;background:#ffc000;"></div>
<div style="left:25px;top:324px;width:41px;height:144px;background:#ffc000;"></div>
<div style="left:25px;top:470px;width:41px;height:50px;background:#ffc000;"></div>
<div style="left:25px;top:522px;width:41px;height:71px;background:#ffc000;"></div>
<div style="left:25px;top:595px;width:41px;height:107px;background:#ffc000;"></div>
<div style="left:24px;top:250px;width:1012px;height:1px;background:#000;"></div>
<div style="left:24px;top:322px;width:1012px;height:1px;background:#000;"></div>
<div style="left:66px;top:286px;width:970px;height:1px;background:#000;"></div>
<div style="left:24px;top:324px;width:1012px;height:1px;background:#000;"></div>
<div style="left:24px;top:468px;width:1012px;height:1px;background:#000;"></div>
<div style="left:66px;top:360px;width:970px;height:1px;background:#000;"></div>
<div style="left:66px;top:396px;width:970px;height:1px;background:#000;"></div>
<div style="left:66px;top:432px;width:970px;height:1px;background:#000;"></div>
<div style="left:24px;top:470px;width:1012px;height:1px;background:#000;"></div>
<div style="left:24px;top:520px;width:1012px;height:1px;background:#000;"></div>
<div style="left:24px;top:522px;width:1012px;height:1px;background:#000;"></div>
<div style="left:24px;top:593px;width:1012px;height:1px;background:#000;"></div>
<div style="left:66px;top:558px;width:970px;height:1px;background:#d4d4d4;"></div>
<div style="left:24px;top:595px;width:1012px;height:1px;background:#000;"></div>
<div style="left:24px;top:702px;width:1012px;height:1px;background:#000;"></div>
<div style="left:66px;top:630px;width:970px;height:1px;background:#d4d4d4;"></div>
<div style="left:66px;top:667px;width:970px;height:1px;background:#d4d4d4;"></div>
<div style="left:1036px;top:250px;width:135px;height:1px;background:#000;"></div>
<div style="left:1036px;top:286px;width:135px;height:1px;background:#000;"></div>
<div style="left:1036px;top:323px;width:135px;height:1px;background:#000;"></div>
<div style="left:1036px;top:360px;width:135px;height:1px;background:#000;"></div>
<div style="left:1036px;top:396px;width:135px;height:1px;background:#000;"></div>
<div style="left:1036px;top:432px;width:135px;height:1px;background:#000;"></div>
<div style="left:1036px;top:469px;width:135px;height:1px;background:#000;"></div>
<div style="left:1036px;top:521px;width:135px;height:1px;background:#000;"></div>
<div style="left:1036px;top:558px;width:135px;height:1px;background:#000;"></div>
<div style="left:1036px;top:594px;width:135px;height:1px;background:#000;"></div>
<div style="left:1036px;top:630px;width:135px;height:1px;background:#000;"></div>
<div style="left:1036px;top:667px;width:135px;height:1px;background:#000;"></div>
<div style="left:1036px;top:703px;width:135px;height:1px;background:#000;"></div>
<div style="left:1036px;top:718px;width:135px;height:1px;background:#000;"></div>
<div style="left:24px;top:250px;width:1px;height:453px;background:#000;"></div>
<div style="left:66px;top:250px;width:1px;height:468px;background:#000;"></div>
<div style="left:196px;top:250px;width:1px;height:468px;background:#000;"></div>
<div style="left:266px;top:250px;width:1px;height:468px;background:#000;"></div>
<div style="left:336px;top:250px;width:1px;height:468px;background:#000;"></div>
<div style="left:406px;top:250px;width:1px;height:468px;background:#000;"></div>
<div style="left:476px;top:250px;width:1px;height:468px;background:#000;"></div>
<div style="left:546px;top:250px;width:1px;height:468px;background:#000;"></div>
<div style="left:616px;top:250px;width:1px;height:468px;background:#000;"></div>
<div style="left:686px;top:250px;width:1px;height:468px;background:#000;"></div>
<div style="left:756px;top:250px;width:1px;height:468px;background:#000;"></div>
<div style="left:826px;top:250px;width:1px;height:468px;background:#000;"></div>
<div style="left:896px;top:250px;width:1px;height:468px;background:#000;"></div>
<div style="left:966px;top:250px;width:1px;height:468px;background:#000;"></div>
<div style="left:1035px;top:250px;width:1px;height:453px;background:#000;"></div>
<div style="left:1037px;top:250px;width:1px;height:453px;background:#000;"></div>
<div style="left:1036px;top:703px;width:1px;height:15px;background:#000;"></div>
<div style="left:1106px;top:250px;width:1px;height:468px;background:#000;"></div>
<div style="left:1170px;top:250px;width:1px;height:469px;background:#000;"></div>
<div style="left:66px;top:704px;width:1105px;height:1px;background:#000;"></div>
<div style="left:66px;top:718px;width:1105px;height:1px;background:#000;"></div>
<div style="left:0px;top:250px;width:24px;height:546px;background:#e6e6e6;"></div>
<div style="left:0px;top:286px;width:24px;height:1px;background:#bdbdbd;"></div>
<div style="left:0px;top:323px;width:24px;height:1px;background:#bdbdbd;"></div>
<div style="left:0px;top:360px;width:24px;height:1px;background:#bdbdbd;"></div>
<div style="left:0px;top:396px;width:24px;height:1px;background:#bdbdbd;"></div>
<div style="left:0px;top:432px;width:24px;height:1px;background:#bdbdbd;"></div>
<div style="left:0px;top:469px;width:24px;height:1px;background:#bdbdbd;"></div>
<div style="left:0px;top:521px;width:24px;height:1px;background:#bdbdbd;"></div>
<div style="left:0px;top:558px;width:24px;height:1px;background:#bdbdbd;"></div>
<div style="left:0px;top:594px;width:24px;height:1px;background:#bdbdbd;"></div>
<div style="left:0px;top:630px;width:24px;height:1px;background:#bdbdbd;"></div>
<div style="left:0px;top:667px;width:24px;height:1px;background:#bdbdbd;"></div>
<div style="left:0px;top:703px;width:24px;height:1px;background:#bdbdbd;"></div>
<div style="left:0px;top:718px;width:24px;height:1px;background:#bdbdbd;"></div>
<div style="left:0px;top:732px;width:24px;height:1px;background:#bdbdbd;"></div>
<div style="left:0px;top:746px;width:24px;height:1px;background:#bdbdbd;"></div>
<div style="left:0px;top:760px;width:24px;height:1px;background:#bdbdbd;"></div>
<div style="left:0px;top:775px;width:24px;height:1px;background:#bdbdbd;"></div>
<div style="left:0px;top:789px;width:24px;height:1px;background:#bdbdbd;"></div>
<div style="left:23px;top:250px;width:1px;height:546px;background:#bdbdbd;"></div>
<div style="left:0px;top:631px;width:23px;height:36px;background:#d2d2d2;"></div>
<div style="left:22px;top:631px;width:2px;height:36px;background:#217346;"></div>
<div style="left:0px;top:233px;width:1570px;height:17px;background:#e6e6e6;"></div>
<div style="left:0px;top:250px;width:1570px;height:1px;background:#9e9e9e;"></div>
<div style="left:24px;top:236px;width:1px;height:14px;background:#c4c4c4;"></div>
<div style="left:66px;top:236px;width:1px;height:14px;background:#c4c4c4;"></div>
<div style="left:196px;top:236px;width:1px;height:14px;background:#c4c4c4;"></div>
<div style="left:266px;top:236px;width:1px;height:14px;background:#c4c4c4;"></div>
<div style="left:336px;top:236px;width:1px;height:14px;background:#c4c4c4;"></div>
<div style="left:406px;top:236px;width:1px;height:14px;background:#c4c4c4;"></div>
<div style="left:476px;top:236px;width:1px;height:14px;background:#c4c4c4;"></div>
<div style="left:546px;top:236px;width:1px;height:14px;background:#c4c4c4;"></div>
<div style="left:616px;top:236px;width:1px;height:14px;background:#c4c4c4;"></div>
<div style="left:686px;top:236px;width:1px;height:14px;background:#c4c4c4;"></div>
<div style="left:756px;top:236px;width:1px;height:14px;background:#c4c4c4;"></div>
<div style="left:826px;top:236px;width:1px;height:14px;background:#c4c4c4;"></div>
<div style="left:896px;top:236px;width:1px;height:14px;background:#c4c4c4;"></div>
<div style="left:966px;top:236px;width:1px;height:14px;background:#c4c4c4;"></div>
<div style="left:1036px;top:236px;width:1px;height:14px;background:#c4c4c4;"></div>
<div style="left:1106px;top:236px;width:1px;height:14px;background:#c4c4c4;"></div>
<div style="left:1170px;top:236px;width:1px;height:14px;background:#c4c4c4;"></div>
<div style="left:1218px;top:236px;width:1px;height:14px;background:#c4c4c4;"></div>
<div style="left:1266px;top:236px;width:1px;height:14px;background:#c4c4c4;"></div>
<div style="left:1314px;top:236px;width:1px;height:14px;background:#c4c4c4;"></div>
<div style="left:1362px;top:236px;width:1px;height:14px;background:#c4c4c4;"></div>
<div style="left:1410px;top:236px;width:1px;height:14px;background:#c4c4c4;"></div>
<div style="left:1458px;top:236px;width:1px;height:14px;background:#c4c4c4;"></div>
<div style="left:1506px;top:236px;width:1px;height:14px;background:#c4c4c4;"></div>
<div style="left:1554px;top:236px;width:1px;height:14px;background:#c4c4c4;"></div>
<div style="left:1362px;top:236px;width:48px;height:14px;background:#d2d2d2;"></div>
<div style="left:1362px;top:248px;width:49px;height:2px;background:#217346;"></div>
<svg style="position:absolute;left:12px;top:240px;" width="10" height="9" viewBox="0 0 10 9"><path d="M8.5 1 V8 H1.5z" fill="#c0c0c0"/></svg>
<div style="left:41.498291015625px;top:237.91px;font-size:10.5px;line-height:1;white-space:pre;color:#000;font-weight:normal;font-kerning:none;">A</div>
<div style="left:127.498291015625px;top:237.91px;font-size:10.5px;line-height:1;white-space:pre;color:#000;font-weight:normal;font-kerning:none;">B</div>
<div style="left:227.2086181640625px;top:237.91px;font-size:10.5px;line-height:1;white-space:pre;color:#000;font-weight:normal;font-kerning:none;">C</div>
<div style="left:297.2086181640625px;top:237.91px;font-size:10.5px;line-height:1;white-space:pre;color:#000;font-weight:normal;font-kerning:none;">D</div>
<div style="left:367.498291015625px;top:237.91px;font-size:10.5px;line-height:1;white-space:pre;color:#000;font-weight:normal;font-kerning:none;">E</div>
<div style="left:437.7930908203125px;top:237.91px;font-size:10.5px;line-height:1;white-space:pre;color:#000;font-weight:normal;font-kerning:none;">F</div>
<div style="left:506.9163818359375px;top:237.91px;font-size:10.5px;line-height:1;white-space:pre;color:#000;font-weight:normal;font-kerning:none;">G</div>
<div style="left:577.2086181640625px;top:237.91px;font-size:10.5px;line-height:1;white-space:pre;color:#000;font-weight:normal;font-kerning:none;">H</div>
<div style="left:649.5413818359375px;top:237.91px;font-size:10.5px;line-height:1;white-space:pre;color:#000;font-weight:normal;font-kerning:none;">I</div>
<div style="left:718.375px;top:237.91px;font-size:10.5px;line-height:1;white-space:pre;color:#000;font-weight:normal;font-kerning:none;">J</div>
<div style="left:787.498291015625px;top:237.91px;font-size:10.5px;line-height:1;white-space:pre;color:#000;font-weight:normal;font-kerning:none;">K</div>
<div style="left:858.0802001953125px;top:237.91px;font-size:10.5px;line-height:1;white-space:pre;color:#000;font-weight:normal;font-kerning:none;">L</div>
<div style="left:926.626708984375px;top:237.91px;font-size:10.5px;line-height:1;white-space:pre;color:#000;font-weight:normal;font-kerning:none;">M</div>
<div style="left:997.2086181640625px;top:237.91px;font-size:10.5px;line-height:1;white-space:pre;color:#000;font-weight:normal;font-kerning:none;">N</div>
<div style="left:1066.9163818359375px;top:237.91px;font-size:10.5px;line-height:1;white-space:pre;color:#000;font-weight:normal;font-kerning:none;">O</div>
<div style="left:1134.498291015625px;top:237.91px;font-size:10.5px;line-height:1;white-space:pre;color:#000;font-weight:normal;font-kerning:none;">P</div>
<div style="left:1189.9163818359375px;top:237.91px;font-size:10.5px;line-height:1;white-space:pre;color:#000;font-weight:normal;font-kerning:none;">Q</div>
<div style="left:1238.2086181640625px;top:237.91px;font-size:10.5px;line-height:1;white-space:pre;color:#000;font-weight:normal;font-kerning:none;">R</div>
<div style="left:1286.498291015625px;top:237.91px;font-size:10.5px;line-height:1;white-space:pre;color:#000;font-weight:normal;font-kerning:none;">S</div>
<div style="left:1334.7930908203125px;top:237.91px;font-size:10.5px;line-height:1;white-space:pre;color:#000;font-weight:normal;font-kerning:none;">T</div>
<div style="left:1382.2086181640625px;top:237.91px;font-size:10.5px;line-height:1;white-space:pre;color:#217346;font-weight:normal;font-kerning:none;">U</div>
<div style="left:1430.498291015625px;top:237.91px;font-size:10.5px;line-height:1;white-space:pre;color:#000;font-weight:normal;font-kerning:none;">V</div>
<div style="left:1477.0447998046875px;top:237.91px;font-size:10.5px;line-height:1;white-space:pre;color:#000;font-weight:normal;font-kerning:none;">W</div>
<div style="left:1526.498291015625px;top:237.91px;font-size:10.5px;line-height:1;white-space:pre;color:#000;font-weight:normal;font-kerning:none;">X</div>
<div style="left:4.8px;top:274.09px;font-size:11px;line-height:1;white-space:pre;color:#000;font-weight:normal;font-kerning:none;transform:scaleX(0.9399);transform-origin:0 0;">35</div>
<div style="left:4.8px;top:311.09px;font-size:11px;line-height:1;white-space:pre;color:#000;font-weight:normal;font-kerning:none;transform:scaleX(0.9399);transform-origin:0 0;">36</div>
<div style="left:4.8px;top:348.09px;font-size:11px;line-height:1;white-space:pre;color:#000;font-weight:normal;font-kerning:none;transform:scaleX(0.9399);transform-origin:0 0;">37</div>
<div style="left:4.8px;top:384.09px;font-size:11px;line-height:1;white-space:pre;color:#000;font-weight:normal;font-kerning:none;transform:scaleX(0.9399);transform-origin:0 0;">38</div>
<div style="left:4.8px;top:420.09px;font-size:11px;line-height:1;white-space:pre;color:#000;font-weight:normal;font-kerning:none;transform:scaleX(0.9399);transform-origin:0 0;">39</div>
<div style="left:4.8px;top:457.09px;font-size:11px;line-height:1;white-space:pre;color:#000;font-weight:normal;font-kerning:none;transform:scaleX(0.9399);transform-origin:0 0;">40</div>
<div style="left:4.8px;top:509.09px;font-size:11px;line-height:1;white-space:pre;color:#000;font-weight:normal;font-kerning:none;transform:scaleX(0.9399);transform-origin:0 0;">41</div>
<div style="left:4.8px;top:546.09px;font-size:11px;line-height:1;white-space:pre;color:#000;font-weight:normal;font-kerning:none;transform:scaleX(0.9399);transform-origin:0 0;">42</div>
<div style="left:4.8px;top:582.09px;font-size:11px;line-height:1;white-space:pre;color:#000;font-weight:normal;font-kerning:none;transform:scaleX(0.9399);transform-origin:0 0;">43</div>
<div style="left:4.8px;top:618.09px;font-size:11px;line-height:1;white-space:pre;color:#000;font-weight:normal;font-kerning:none;transform:scaleX(0.9399);transform-origin:0 0;">44</div>
<div style="left:4.8px;top:655.09px;font-size:11px;line-height:1;white-space:pre;color:#217346;font-weight:normal;font-kerning:none;transform:scaleX(0.9399);transform-origin:0 0;">45</div>
<div style="left:4.8px;top:691.09px;font-size:11px;line-height:1;white-space:pre;color:#000;font-weight:normal;font-kerning:none;transform:scaleX(0.9399);transform-origin:0 0;">46</div>
<div style="left:4.8px;top:706.09px;font-size:11px;line-height:1;white-space:pre;color:#000;font-weight:normal;font-kerning:none;transform:scaleX(0.9399);transform-origin:0 0;">47</div>
<div style="left:4.8px;top:720.09px;font-size:11px;line-height:1;white-space:pre;color:#000;font-weight:normal;font-kerning:none;transform:scaleX(0.9399);transform-origin:0 0;">48</div>
<div style="left:4.8px;top:734.09px;font-size:11px;line-height:1;white-space:pre;color:#000;font-weight:normal;font-kerning:none;transform:scaleX(0.9399);transform-origin:0 0;">49</div>
<div style="left:4.8px;top:748.09px;font-size:11px;line-height:1;white-space:pre;color:#000;font-weight:normal;font-kerning:none;transform:scaleX(0.9399);transform-origin:0 0;">50</div>
<div style="left:4.8px;top:763.09px;font-size:11px;line-height:1;white-space:pre;color:#000;font-weight:normal;font-kerning:none;transform:scaleX(0.9399);transform-origin:0 0;">51</div>
<div style="left:4.8px;top:777.09px;font-size:11px;line-height:1;white-space:pre;color:#000;font-weight:normal;font-kerning:none;transform:scaleX(0.9399);transform-origin:0 0;">52</div>
<div style="left:4.8px;top:790.69px;font-size:11px;line-height:1;white-space:pre;color:#000;font-weight:normal;font-kerning:none;transform:scaleX(0.9399);transform-origin:0 0;">53</div>
<div style="left:76.8px;top:251.84px;font-size:9.4px;line-height:1;white-space:pre;color:#000;font-weight:normal;font-kerning:none;transform:scaleX(0.9300);transform-origin:0 0;-webkit-text-stroke:0.25px #000;">22 Rainier St.</div>
<div style="left:76.8px;top:263.74px;font-size:9.4px;line-height:1;white-space:pre;color:#000;font-weight:normal;font-kerning:none;transform:scaleX(0.9300);transform-origin:0 0;-webkit-text-stroke:0.25px #000;">Seattle, WA 98121</div>
<div style="left:76.8px;top:275.64px;font-size:9.4px;line-height:1;white-space:pre;color:#000;font-weight:normal;font-kerning:none;transform:scaleX(0.9300);transform-origin:0 0;-webkit-text-stroke:0.25px #000;">(425) 555 - 8994</div>
<div style="left:228.46708984375px;top:252.02px;font-size:12.5px;line-height:1;white-space:pre;color:#000;font-weight:normal;font-kerning:none;transform:scaleX(0.8300);transform-origin:0 0;">33,100</div>
<div style="left:298.46708984375px;top:252.02px;font-size:12.5px;line-height:1;white-space:pre;color:#000;font-weight:normal;font-kerning:none;transform:scaleX(0.8300);transform-origin:0 0;">31,700</div>
<div style="left:368.46708984375px;top:252.02px;font-size:12.5px;line-height:1;white-space:pre;color:#000;font-weight:normal;font-kerning:none;transform:scaleX(0.8300);transform-origin:0 0;">34,600</div>
<div style="left:438.46708984375px;top:252.02px;font-size:12.5px;line-height:1;white-space:pre;color:#000;font-weight:normal;font-kerning:none;transform:scaleX(0.8300);transform-origin:0 0;">33,900</div>
<div style="left:508.46708984375005px;top:252.02px;font-size:12.5px;line-height:1;white-space:pre;color:#000;font-weight:normal;font-kerning:none;transform:scaleX(0.8300);transform-origin:0 0;">38,500</div>
<div style="left:578.46708984375px;top:252.02px;font-size:12.5px;line-height:1;white-space:pre;color:#000;font-weight:normal;font-kerning:none;transform:scaleX(0.8300);transform-origin:0 0;">37,100</div>
<div style="left:648.46708984375px;top:252.02px;font-size:12.5px;line-height:1;white-space:pre;color:#000;font-weight:normal;font-kerning:none;transform:scaleX(0.8300);transform-origin:0 0;">37,000</div>
<div style="left:718.46708984375px;top:252.02px;font-size:12.5px;line-height:1;white-space:pre;color:#000;font-weight:normal;font-kerning:none;transform:scaleX(0.8300);transform-origin:0 0;">40,000</div>
<div style="left:788.46708984375px;top:252.02px;font-size:12.5px;line-height:1;white-space:pre;color:#000;font-weight:normal;font-kerning:none;transform:scaleX(0.8300);transform-origin:0 0;">36,100</div>
<div style="left:858.46708984375px;top:252.02px;font-size:12.5px;line-height:1;white-space:pre;color:#000;font-weight:normal;font-kerning:none;transform:scaleX(0.8300);transform-origin:0 0;">40,700</div>
<div style="left:928.46708984375px;top:252.02px;font-size:12.5px;line-height:1;white-space:pre;color:#000;font-weight:normal;font-kerning:none;transform:scaleX(0.8300);transform-origin:0 0;">32,000</div>
<div style="left:998.46708984375px;top:252.02px;font-size:12.5px;line-height:1;white-space:pre;color:#000;font-weight:normal;font-kerning:none;transform:scaleX(0.8300);transform-origin:0 0;">37,200</div>
<div style="left:1062.6970092773438px;top:252.02px;font-size:12.5px;line-height:1;white-space:pre;color:#000;font-weight:normal;font-kerning:none;transform:scaleX(0.8300);transform-origin:0 0;">431,900</div>
<div style="left:1132.46708984375px;top:252.02px;font-size:12.5px;line-height:1;white-space:pre;color:#000;font-weight:normal;font-kerning:none;transform:scaleX(0.8300);transform-origin:0 0;">35,992</div>
<div style="left:76.8px;top:287.84px;font-size:9.4px;line-height:1;white-space:pre;color:#000;font-weight:normal;font-kerning:none;transform:scaleX(0.9300);transform-origin:0 0;-webkit-text-stroke:0.25px #000;">531 Smith Ln.</div>
<div style="left:76.8px;top:299.74px;font-size:9.4px;line-height:1;white-space:pre;color:#000;font-weight:normal;font-kerning:none;transform:scaleX(0.9300);transform-origin:0 0;-webkit-text-stroke:0.25px #000;">Bellingham, WA 98228</div>
<div style="left:76.8px;top:311.64px;font-size:9.4px;line-height:1;white-space:pre;color:#000;font-weight:normal;font-kerning:none;transform:scaleX(0.9300);transform-origin:0 0;-webkit-text-stroke:0.25px #000;">(253) 555 - 2130</div>
<div style="left:228.46708984375px;top:288.02px;font-size:12.5px;line-height:1;white-space:pre;color:#000;font-weight:normal;font-kerning:none;transform:scaleX(0.8300);transform-origin:0 0;">23,700</div>
<div style="left:298.46708984375px;top:288.02px;font-size:12.5px;line-height:1;white-space:pre;color:#000;font-weight:normal;font-kerning:none;transform:scaleX(0.8300);transform-origin:0 0;">21,000</div>
<div style="left:368.46708984375px;top:288.02px;font-size:12.5px;line-height:1;white-space:pre;color:#000;font-weight:normal;font-kerning:none;transform:scaleX(0.8300);transform-origin:0 0;">26,600</div>
<div style="left:438.46708984375px;top:288.02px;font-size:12.5px;line-height:1;white-space:pre;color:#000;font-weight:normal;font-kerning:none;transform:scaleX(0.8300);transform-origin:0 0;">29,600</div>
<div style="left:508.46708984375005px;top:288.02px;font-size:12.5px;line-height:1;white-space:pre;color:#000;font-weight:normal;font-kerning:none;transform:scaleX(0.8300);transform-origin:0 0;">29,400</div>
<div style="left:578.46708984375px;top:288.02px;font-size:12.5px;line-height:1;white-space:pre;color:#000;font-weight:normal;font-kerning:none;transform:scaleX(0.8300);transform-origin:0 0;">27,600</div>
<div style="left:648.46708984375px;top:288.02px;font-size:12.5px;line-height:1;white-space:pre;color:#000;font-weight:normal;font-kerning:none;transform:scaleX(0.8300);transform-origin:0 0;">31,300</div>
<div style="left:718.46708984375px;top:288.02px;font-size:12.5px;line-height:1;white-space:pre;color:#000;font-weight:normal;font-kerning:none;transform:scaleX(0.8300);transform-origin:0 0;">29,500</div>
<div style="left:788.46708984375px;top:288.02px;font-size:12.5px;line-height:1;white-space:pre;color:#000;font-weight:normal;font-kerning:none;transform:scaleX(0.8300);transform-origin:0 0;">26,900</div>
<div style="left:858.46708984375px;top:288.02px;font-size:12.5px;line-height:1;white-space:pre;color:#000;font-weight:normal;font-kerning:none;transform:scaleX(0.8300);transform-origin:0 0;">27,300</div>
<div style="left:928.46708984375px;top:288.02px;font-size:12.5px;line-height:1;white-space:pre;color:#000;font-weight:normal;font-kerning:none;transform:scaleX(0.8300);transform-origin:0 0;">26,000</div>
<div style="left:998.46708984375px;top:288.02px;font-size:12.5px;line-height:1;white-space:pre;color:#000;font-weight:normal;font-kerning:none;transform:scaleX(0.8300);transform-origin:0 0;">26,000</div>
<div style="left:1062.6970092773438px;top:288.02px;font-size:12.5px;line-height:1;white-space:pre;color:#000;font-weight:normal;font-kerning:none;transform:scaleX(0.8300);transform-origin:0 0;">324,900</div>
<div style="left:1132.46708984375px;top:288.02px;font-size:12.5px;line-height:1;white-space:pre;color:#000;font-weight:normal;font-kerning:none;transform:scaleX(0.8300);transform-origin:0 0;">27,075</div>
<div style="left:76.8px;top:324.84px;font-size:9.4px;line-height:1;white-space:pre;color:#000;font-weight:normal;font-kerning:none;transform:scaleX(0.9300);transform-origin:0 0;-webkit-text-stroke:0.25px #000;">100 Business Way</div>
<div style="left:76.8px;top:336.74px;font-size:9.4px;line-height:1;white-space:pre;color:#000;font-weight:normal;font-kerning:none;transform:scaleX(0.9300);transform-origin:0 0;-webkit-text-stroke:0.25px #000;">Portland, OR 97214</div>
<div style="left:76.8px;top:348.64px;font-size:9.4px;line-height:1;white-space:pre;color:#000;font-weight:normal;font-kerning:none;transform:scaleX(0.9300);transform-origin:0 0;-webkit-text-stroke:0.25px #000;">(503) 555 - 0991</div>
<div style="left:228.46708984375px;top:325.02px;font-size:12.5px;line-height:1;white-space:pre;color:#000;font-weight:normal;font-kerning:none;transform:scaleX(0.8300);transform-origin:0 0;">46,800</div>
<div style="left:298.46708984375px;top:325.02px;font-size:12.5px;line-height:1;white-space:pre;color:#000;font-weight:normal;font-kerning:none;transform:scaleX(0.8300);transform-origin:0 0;">41,200</div>
<div style="left:368.46708984375px;top:325.02px;font-size:12.5px;line-height:1;white-space:pre;color:#000;font-weight:normal;font-kerning:none;transform:scaleX(0.8300);transform-origin:0 0;">49,700</div>
<div style="left:438.46708984375px;top:325.02px;font-size:12.5px;line-height:1;white-space:pre;color:#000;font-weight:normal;font-kerning:none;transform:scaleX(0.8300);transform-origin:0 0;">52,100</div>
<div style="left:508.46708984375005px;top:325.02px;font-size:12.5px;line-height:1;white-space:pre;color:#000;font-weight:normal;font-kerning:none;transform:scaleX(0.8300);transform-origin:0 0;">54,400</div>
<div style="left:578.46708984375px;top:325.02px;font-size:12.5px;line-height:1;white-space:pre;color:#000;font-weight:normal;font-kerning:none;transform:scaleX(0.8300);transform-origin:0 0;">57,400</div>
<div style="left:648.46708984375px;top:325.02px;font-size:12.5px;line-height:1;white-space:pre;color:#000;font-weight:normal;font-kerning:none;transform:scaleX(0.8300);transform-origin:0 0;">57,200</div>
<div style="left:718.46708984375px;top:325.02px;font-size:12.5px;line-height:1;white-space:pre;color:#000;font-weight:normal;font-kerning:none;transform:scaleX(0.8300);transform-origin:0 0;">58,500</div>
<div style="left:788.46708984375px;top:325.02px;font-size:12.5px;line-height:1;white-space:pre;color:#000;font-weight:normal;font-kerning:none;transform:scaleX(0.8300);transform-origin:0 0;">56,300</div>
<div style="left:858.46708984375px;top:325.02px;font-size:12.5px;line-height:1;white-space:pre;color:#000;font-weight:normal;font-kerning:none;transform:scaleX(0.8300);transform-origin:0 0;">53,800</div>
<div style="left:928.46708984375px;top:325.02px;font-size:12.5px;line-height:1;white-space:pre;color:#000;font-weight:normal;font-kerning:none;transform:scaleX(0.8300);transform-origin:0 0;">51,000</div>
<div style="left:998.46708984375px;top:325.02px;font-size:12.5px;line-height:1;white-space:pre;color:#000;font-weight:normal;font-kerning:none;transform:scaleX(0.8300);transform-origin:0 0;">54,000</div>
<div style="left:1062.6970092773438px;top:325.02px;font-size:12.5px;line-height:1;white-space:pre;color:#000;font-weight:normal;font-kerning:none;transform:scaleX(0.8300);transform-origin:0 0;">632,400</div>
<div style="left:1132.46708984375px;top:325.02px;font-size:12.5px;line-height:1;white-space:pre;color:#000;font-weight:normal;font-kerning:none;transform:scaleX(0.8300);transform-origin:0 0;">52,700</div>
<div style="left:76.8px;top:361.84px;font-size:9.4px;line-height:1;white-space:pre;color:#000;font-weight:normal;font-kerning:none;transform:scaleX(0.9300);transform-origin:0 0;-webkit-text-stroke:0.25px #000;">14 Lewis Ln.</div>
<div style="left:76.8px;top:373.74px;font-size:9.4px;line-height:1;white-space:pre;color:#000;font-weight:normal;font-kerning:none;transform:scaleX(0.9300);transform-origin:0 0;-webkit-text-stroke:0.25px #000;">Eugene, OR 97405</div>
<div style="left:76.8px;top:385.64px;font-size:9.4px;line-height:1;white-space:pre;color:#000;font-weight:normal;font-kerning:none;transform:scaleX(0.9300);transform-origin:0 0;-webkit-text-stroke:0.25px #000;">(541) 555 - 8509</div>
<div style="left:228.46708984375px;top:362.02px;font-size:12.5px;line-height:1;white-space:pre;color:#000;font-weight:normal;font-kerning:none;transform:scaleX(0.8300);transform-origin:0 0;">30,600</div>
<div style="left:298.46708984375px;top:362.02px;font-size:12.5px;line-height:1;white-space:pre;color:#000;font-weight:normal;font-kerning:none;transform:scaleX(0.8300);transform-origin:0 0;">27,300</div>
<div style="left:368.46708984375px;top:362.02px;font-size:12.5px;line-height:1;white-space:pre;color:#000;font-weight:normal;font-kerning:none;transform:scaleX(0.8300);transform-origin:0 0;">32,000</div>
<div style="left:438.46708984375px;top:362.02px;font-size:12.5px;line-height:1;white-space:pre;color:#000;font-weight:normal;font-kerning:none;transform:scaleX(0.8300);transform-origin:0 0;">32,400</div>
<div style="left:508.46708984375005px;top:362.02px;font-size:12.5px;line-height:1;white-space:pre;color:#000;font-weight:normal;font-kerning:none;transform:scaleX(0.8300);transform-origin:0 0;">36,600</div>
<div style="left:578.46708984375px;top:362.02px;font-size:12.5px;line-height:1;white-space:pre;color:#000;font-weight:normal;font-kerning:none;transform:scaleX(0.8300);transform-origin:0 0;">34,900</div>
<div style="left:648.46708984375px;top:362.02px;font-size:12.5px;line-height:1;white-space:pre;color:#000;font-weight:normal;font-kerning:none;transform:scaleX(0.8300);transform-origin:0 0;">39,400</div>
<div style="left:718.46708984375px;top:362.02px;font-size:12.5px;line-height:1;white-space:pre;color:#000;font-weight:normal;font-kerning:none;transform:scaleX(0.8300);transform-origin:0 0;">38,600</div>
<div style="left:788.46708984375px;top:362.02px;font-size:12.5px;line-height:1;white-space:pre;color:#000;font-weight:normal;font-kerning:none;transform:scaleX(0.8300);transform-origin:0 0;">35,900</div>
<div style="left:858.46708984375px;top:362.02px;font-size:12.5px;line-height:1;white-space:pre;color:#000;font-weight:normal;font-kerning:none;transform:scaleX(0.8300);transform-origin:0 0;">34,800</div>
<div style="left:928.46708984375px;top:362.02px;font-size:12.5px;line-height:1;white-space:pre;color:#000;font-weight:normal;font-kerning:none;transform:scaleX(0.8300);transform-origin:0 0;">34,000</div>
<div style="left:998.46708984375px;top:362.02px;font-size:12.5px;line-height:1;white-space:pre;color:#000;font-weight:normal;font-kerning:none;transform:scaleX(0.8300);transform-origin:0 0;">34,000</div>
<div style="left:1062.6970092773438px;top:362.02px;font-size:12.5px;line-height:1;white-space:pre;color:#000;font-weight:normal;font-kerning:none;transform:scaleX(0.8300);transform-origin:0 0;">410,500</div>
<div style="left:1132.46708984375px;top:362.02px;font-size:12.5px;line-height:1;white-space:pre;color:#000;font-weight:normal;font-kerning:none;transform:scaleX(0.8300);transform-origin:0 0;">34,208</div>
<div style="left:76.8px;top:397.84px;font-size:9.4px;line-height:1;white-space:pre;color:#000;font-weight:normal;font-kerning:none;transform:scaleX(0.9300);transform-origin:0 0;-webkit-text-stroke:0.25px #000;">5514 Mound St.</div>
<div style="left:76.8px;top:409.74px;font-size:9.4px;line-height:1;white-space:pre;color:#000;font-weight:normal;font-kerning:none;transform:scaleX(0.9300);transform-origin:0 0;-webkit-text-stroke:0.25px #000;">Eugene, OR 97408</div>
<div style="left:76.8px;top:421.64px;font-size:9.4px;line-height:1;white-space:pre;color:#000;font-weight:normal;font-kerning:none;transform:scaleX(0.9300);transform-origin:0 0;-webkit-text-stroke:0.25px #000;">(541) 555 - 0040</div>
<div style="left:228.46708984375px;top:398.02px;font-size:12.5px;line-height:1;white-space:pre;color:#000;font-weight:normal;font-kerning:none;transform:scaleX(0.8300);transform-origin:0 0;">20,100</div>
<div style="left:298.46708984375px;top:398.02px;font-size:12.5px;line-height:1;white-space:pre;color:#000;font-weight:normal;font-kerning:none;transform:scaleX(0.8300);transform-origin:0 0;">21,200</div>
<div style="left:368.46708984375px;top:398.02px;font-size:12.5px;line-height:1;white-space:pre;color:#000;font-weight:normal;font-kerning:none;transform:scaleX(0.8300);transform-origin:0 0;">25,100</div>
<div style="left:438.46708984375px;top:398.02px;font-size:12.5px;line-height:1;white-space:pre;color:#000;font-weight:normal;font-kerning:none;transform:scaleX(0.8300);transform-origin:0 0;">26,300</div>
<div style="left:508.46708984375005px;top:398.02px;font-size:12.5px;line-height:1;white-space:pre;color:#000;font-weight:normal;font-kerning:none;transform:scaleX(0.8300);transform-origin:0 0;">29,200</div>
<div style="left:578.46708984375px;top:398.02px;font-size:12.5px;line-height:1;white-space:pre;color:#000;font-weight:normal;font-kerning:none;transform:scaleX(0.8300);transform-origin:0 0;">28,900</div>
<div style="left:648.46708984375px;top:398.02px;font-size:12.5px;line-height:1;white-space:pre;color:#000;font-weight:normal;font-kerning:none;transform:scaleX(0.8300);transform-origin:0 0;">28,300</div>
<div style="left:718.46708984375px;top:398.02px;font-size:12.5px;line-height:1;white-space:pre;color:#000;font-weight:normal;font-kerning:none;transform:scaleX(0.8300);transform-origin:0 0;">31,200</div>
<div style="left:788.46708984375px;top:398.02px;font-size:12.5px;line-height:1;white-space:pre;color:#000;font-weight:normal;font-kerning:none;transform:scaleX(0.8300);transform-origin:0 0;">24,900</div>
<div style="left:858.46708984375px;top:398.02px;font-size:12.5px;line-height:1;white-space:pre;color:#000;font-weight:normal;font-kerning:none;transform:scaleX(0.8300);transform-origin:0 0;">27,200</div>
<div style="left:928.46708984375px;top:398.02px;font-size:12.5px;line-height:1;white-space:pre;color:#000;font-weight:normal;font-kerning:none;transform:scaleX(0.8300);transform-origin:0 0;">24,000</div>
<div style="left:998.46708984375px;top:398.02px;font-size:12.5px;line-height:1;white-space:pre;color:#000;font-weight:normal;font-kerning:none;transform:scaleX(0.8300);transform-origin:0 0;">27,100</div>
<div style="left:1062.6970092773438px;top:398.02px;font-size:12.5px;line-height:1;white-space:pre;color:#000;font-weight:normal;font-kerning:none;transform:scaleX(0.8300);transform-origin:0 0;">313,500</div>
<div style="left:1132.46708984375px;top:398.02px;font-size:12.5px;line-height:1;white-space:pre;color:#000;font-weight:normal;font-kerning:none;transform:scaleX(0.8300);transform-origin:0 0;">26,125</div>
<div style="left:76.8px;top:433.84px;font-size:9.4px;line-height:1;white-space:pre;color:#000;font-weight:normal;font-kerning:none;transform:scaleX(0.9300);transform-origin:0 0;-webkit-text-stroke:0.25px #000;">41033 Main St.</div>
<div style="left:76.8px;top:445.74px;font-size:9.4px;line-height:1;white-space:pre;color:#000;font-weight:normal;font-kerning:none;transform:scaleX(0.9300);transform-origin:0 0;-webkit-text-stroke:0.25px #000;">Ashland, OR 97250</div>
<div style="left:76.8px;top:457.64px;font-size:9.4px;line-height:1;white-space:pre;color:#000;font-weight:normal;font-kerning:none;transform:scaleX(0.9300);transform-origin:0 0;-webkit-text-stroke:0.25px #000;">(541) 555 - 3134</div>
<div style="left:228.46708984375px;top:434.02px;font-size:12.5px;line-height:1;white-space:pre;color:#000;font-weight:normal;font-kerning:none;transform:scaleX(0.8300);transform-origin:0 0;">47,900</div>
<div style="left:298.46708984375px;top:434.02px;font-size:12.5px;line-height:1;white-space:pre;color:#000;font-weight:normal;font-kerning:none;transform:scaleX(0.8300);transform-origin:0 0;">46,000</div>
<div style="left:368.46708984375px;top:434.02px;font-size:12.5px;line-height:1;white-space:pre;color:#000;font-weight:normal;font-kerning:none;transform:scaleX(0.8300);transform-origin:0 0;">54,900</div>
<div style="left:438.46708984375px;top:434.02px;font-size:12.5px;line-height:1;white-space:pre;color:#000;font-weight:normal;font-kerning:none;transform:scaleX(0.8300);transform-origin:0 0;">53,700</div>
<div style="left:508.46708984375005px;top:434.02px;font-size:12.5px;line-height:1;white-space:pre;color:#000;font-weight:normal;font-kerning:none;transform:scaleX(0.8300);transform-origin:0 0;">57,500</div>
<div style="left:578.46708984375px;top:434.02px;font-size:12.5px;line-height:1;white-space:pre;color:#000;font-weight:normal;font-kerning:none;transform:scaleX(0.8300);transform-origin:0 0;">56,500</div>
<div style="left:648.46708984375px;top:434.02px;font-size:12.5px;line-height:1;white-space:pre;color:#000;font-weight:normal;font-kerning:none;transform:scaleX(0.8300);transform-origin:0 0;">60,900</div>
<div style="left:718.46708984375px;top:434.02px;font-size:12.5px;line-height:1;white-space:pre;color:#000;font-weight:normal;font-kerning:none;transform:scaleX(0.8300);transform-origin:0 0;">60,300</div>
<div style="left:788.46708984375px;top:434.02px;font-size:12.5px;line-height:1;white-space:pre;color:#000;font-weight:normal;font-kerning:none;transform:scaleX(0.8300);transform-origin:0 0;">57,100</div>
<div style="left:858.46708984375px;top:434.02px;font-size:12.5px;line-height:1;white-space:pre;color:#000;font-weight:normal;font-kerning:none;transform:scaleX(0.8300);transform-origin:0 0;">56,400</div>
<div style="left:928.46708984375px;top:434.02px;font-size:12.5px;line-height:1;white-space:pre;color:#000;font-weight:normal;font-kerning:none;transform:scaleX(0.8300);transform-origin:0 0;">52,100</div>
<div style="left:998.46708984375px;top:434.02px;font-size:12.5px;line-height:1;white-space:pre;color:#000;font-weight:normal;font-kerning:none;transform:scaleX(0.8300);transform-origin:0 0;">53,000</div>
<div style="left:1062.6970092773438px;top:434.02px;font-size:12.5px;line-height:1;white-space:pre;color:#000;font-weight:normal;font-kerning:none;transform:scaleX(0.8300);transform-origin:0 0;">656,300</div>
<div style="left:1132.46708984375px;top:434.02px;font-size:12.5px;line-height:1;white-space:pre;color:#000;font-weight:normal;font-kerning:none;transform:scaleX(0.8300);transform-origin:0 0;">54,692</div>
<div style="left:76.8px;top:470.84px;font-size:9.4px;line-height:1;white-space:pre;color:#000;font-weight:normal;font-kerning:none;transform:scaleX(0.9300);transform-origin:0 0;-webkit-text-stroke:0.25px #000;">112 Reservoir Ln.</div>
<div style="left:76.8px;top:482.74px;font-size:9.4px;line-height:1;white-space:pre;color:#000;font-weight:normal;font-kerning:none;transform:scaleX(0.9300);transform-origin:0 0;-webkit-text-stroke:0.25px #000;">Boise, ID 83702</div>
<div style="left:76.8px;top:494.64px;font-size:9.4px;line-height:1;white-space:pre;color:#000;font-weight:normal;font-kerning:none;transform:scaleX(0.9300);transform-origin:0 0;-webkit-text-stroke:0.25px #000;">(208) 555 - 2138</div>
<div style="left:228.46708984375px;top:471.02px;font-size:12.5px;line-height:1;white-space:pre;color:#000;font-weight:normal;font-kerning:none;transform:scaleX(0.8300);transform-origin:0 0;">39,200</div>
<div style="left:298.46708984375px;top:471.02px;font-size:12.5px;line-height:1;white-space:pre;color:#000;font-weight:normal;font-kerning:none;transform:scaleX(0.8300);transform-origin:0 0;">35,900</div>
<div style="left:368.46708984375px;top:471.02px;font-size:12.5px;line-height:1;white-space:pre;color:#000;font-weight:normal;font-kerning:none;transform:scaleX(0.8300);transform-origin:0 0;">45,800</div>
<div style="left:438.46708984375px;top:471.02px;font-size:12.5px;line-height:1;white-space:pre;color:#000;font-weight:normal;font-kerning:none;transform:scaleX(0.8300);transform-origin:0 0;">44,200</div>
<div style="left:508.46708984375005px;top:471.02px;font-size:12.5px;line-height:1;white-space:pre;color:#000;font-weight:normal;font-kerning:none;transform:scaleX(0.8300);transform-origin:0 0;">47,100</div>
<div style="left:578.46708984375px;top:471.02px;font-size:12.5px;line-height:1;white-space:pre;color:#000;font-weight:normal;font-kerning:none;transform:scaleX(0.8300);transform-origin:0 0;">45,700</div>
<div style="left:648.46708984375px;top:471.02px;font-size:12.5px;line-height:1;white-space:pre;color:#000;font-weight:normal;font-kerning:none;transform:scaleX(0.8300);transform-origin:0 0;">48,800</div>
<div style="left:718.46708984375px;top:471.02px;font-size:12.5px;line-height:1;white-space:pre;color:#000;font-weight:normal;font-kerning:none;transform:scaleX(0.8300);transform-origin:0 0;">49,500</div>
<div style="left:788.46708984375px;top:471.02px;font-size:12.5px;line-height:1;white-space:pre;color:#000;font-weight:normal;font-kerning:none;transform:scaleX(0.8300);transform-origin:0 0;">48,900</div>
<div style="left:858.46708984375px;top:471.02px;font-size:12.5px;line-height:1;white-space:pre;color:#000;font-weight:normal;font-kerning:none;transform:scaleX(0.8300);transform-origin:0 0;">50,100</div>
<div style="left:928.46708984375px;top:471.02px;font-size:12.5px;line-height:1;white-space:pre;color:#000;font-weight:normal;font-kerning:none;transform:scaleX(0.8300);transform-origin:0 0;">44,000</div>
<div style="left:998.46708984375px;top:471.02px;font-size:12.5px;line-height:1;white-space:pre;color:#000;font-weight:normal;font-kerning:none;transform:scaleX(0.8300);transform-origin:0 0;">46,000</div>
<div style="left:1062.6970092773438px;top:471.02px;font-size:12.5px;line-height:1;white-space:pre;color:#000;font-weight:normal;font-kerning:none;transform:scaleX(0.8300);transform-origin:0 0;">545,200</div>
<div style="left:1132.46708984375px;top:471.02px;font-size:12.5px;line-height:1;white-space:pre;color:#000;font-weight:normal;font-kerning:none;transform:scaleX(0.8300);transform-origin:0 0;">45,433</div>
<div style="left:76.8px;top:522.84px;font-size:9.4px;line-height:1;white-space:pre;color:#000;font-weight:normal;font-kerning:none;transform:scaleX(0.9300);transform-origin:0 0;-webkit-text-stroke:0.25px #000;">1688 Latrobe Ave.</div>
<div style="left:76.8px;top:534.74px;font-size:9.4px;line-height:1;white-space:pre;color:#000;font-weight:normal;font-kerning:none;transform:scaleX(0.9300);transform-origin:0 0;-webkit-text-stroke:0.25px #000;">Las Vegas, NV 89102</div>
<div style="left:76.8px;top:546.64px;font-size:9.4px;line-height:1;white-space:pre;color:#000;font-weight:normal;font-kerning:none;transform:scaleX(0.9300);transform-origin:0 0;-webkit-text-stroke:0.25px #000;">(702)  555 - 7734</div>
<div style="left:228.46708984375px;top:523.02px;font-size:12.5px;line-height:1;white-space:pre;color:#000;font-weight:normal;font-kerning:none;transform:scaleX(0.8300);transform-origin:0 0;">27,700</div>
<div style="left:298.46708984375px;top:523.02px;font-size:12.5px;line-height:1;white-space:pre;color:#000;font-weight:normal;font-kerning:none;transform:scaleX(0.8300);transform-origin:0 0;">24,100</div>
<div style="left:368.46708984375px;top:523.02px;font-size:12.5px;line-height:1;white-space:pre;color:#000;font-weight:normal;font-kerning:none;transform:scaleX(0.8300);transform-origin:0 0;">32,100</div>
<div style="left:438.46708984375px;top:523.02px;font-size:12.5px;line-height:1;white-space:pre;color:#000;font-weight:normal;font-kerning:none;transform:scaleX(0.8300);transform-origin:0 0;">35,400</div>
<div style="left:508.46708984375005px;top:523.02px;font-size:12.5px;line-height:1;white-space:pre;color:#000;font-weight:normal;font-kerning:none;transform:scaleX(0.8300);transform-origin:0 0;">34,000</div>
<div style="left:578.46708984375px;top:523.02px;font-size:12.5px;line-height:1;white-space:pre;color:#000;font-weight:normal;font-kerning:none;transform:scaleX(0.8300);transform-origin:0 0;">38,800</div>
<div style="left:648.46708984375px;top:523.02px;font-size:12.5px;line-height:1;white-space:pre;color:#000;font-weight:normal;font-kerning:none;transform:scaleX(0.8300);transform-origin:0 0;">38,100</div>
<div style="left:718.46708984375px;top:523.02px;font-size:12.5px;line-height:1;white-space:pre;color:#000;font-weight:normal;font-kerning:none;transform:scaleX(0.8300);transform-origin:0 0;">39,600</div>
<div style="left:788.46708984375px;top:523.02px;font-size:12.5px;line-height:1;white-space:pre;color:#000;font-weight:normal;font-kerning:none;transform:scaleX(0.8300);transform-origin:0 0;">36,700</div>
<div style="left:858.46708984375px;top:523.02px;font-size:12.5px;line-height:1;white-space:pre;color:#000;font-weight:normal;font-kerning:none;transform:scaleX(0.8300);transform-origin:0 0;">34,100</div>
<div style="left:928.46708984375px;top:523.02px;font-size:12.5px;line-height:1;white-space:pre;color:#000;font-weight:normal;font-kerning:none;transform:scaleX(0.8300);transform-origin:0 0;">35,000</div>
<div style="left:998.46708984375px;top:523.02px;font-size:12.5px;line-height:1;white-space:pre;color:#000;font-weight:normal;font-kerning:none;transform:scaleX(0.8300);transform-origin:0 0;">33,000</div>
<div style="left:1062.6970092773438px;top:523.02px;font-size:12.5px;line-height:1;white-space:pre;color:#000;font-weight:normal;font-kerning:none;transform:scaleX(0.8300);transform-origin:0 0;">408,600</div>
<div style="left:1132.46708984375px;top:523.02px;font-size:12.5px;line-height:1;white-space:pre;color:#000;font-weight:normal;font-kerning:none;transform:scaleX(0.8300);transform-origin:0 0;">34,050</div>
<div style="left:76.8px;top:559.84px;font-size:9.4px;line-height:1;white-space:pre;color:#000;font-weight:normal;font-kerning:none;transform:scaleX(0.9300);transform-origin:0 0;-webkit-text-stroke:0.25px #000;">4188 Starr Ln.</div>
<div style="left:76.8px;top:571.74px;font-size:9.4px;line-height:1;white-space:pre;color:#000;font-weight:normal;font-kerning:none;transform:scaleX(0.9300);transform-origin:0 0;-webkit-text-stroke:0.25px #000;">Las Vegas, NV 89199</div>
<div style="left:76.8px;top:583.64px;font-size:9.4px;line-height:1;white-space:pre;color:#000;font-weight:normal;font-kerning:none;transform:scaleX(0.9300);transform-origin:0 0;-webkit-text-stroke:0.25px #000;">(702) 555 - 9148</div>
<div style="left:228.46708984375px;top:560.02px;font-size:12.5px;line-height:1;white-space:pre;color:#000;font-weight:normal;font-kerning:none;transform:scaleX(0.8300);transform-origin:0 0;">39,400</div>
<div style="left:298.46708984375px;top:560.02px;font-size:12.5px;line-height:1;white-space:pre;color:#000;font-weight:normal;font-kerning:none;transform:scaleX(0.8300);transform-origin:0 0;">40,700</div>
<div style="left:368.46708984375px;top:560.02px;font-size:12.5px;line-height:1;white-space:pre;color:#000;font-weight:normal;font-kerning:none;transform:scaleX(0.8300);transform-origin:0 0;">46,800</div>
<div style="left:438.46708984375px;top:560.02px;font-size:12.5px;line-height:1;white-space:pre;color:#000;font-weight:normal;font-kerning:none;transform:scaleX(0.8300);transform-origin:0 0;">49,400</div>
<div style="left:508.46708984375005px;top:560.02px;font-size:12.5px;line-height:1;white-space:pre;color:#000;font-weight:normal;font-kerning:none;transform:scaleX(0.8300);transform-origin:0 0;">48,400</div>
<div style="left:578.46708984375px;top:560.02px;font-size:12.5px;line-height:1;white-space:pre;color:#000;font-weight:normal;font-kerning:none;transform:scaleX(0.8300);transform-origin:0 0;">52,100</div>
<div style="left:648.46708984375px;top:560.02px;font-size:12.5px;line-height:1;white-space:pre;color:#000;font-weight:normal;font-kerning:none;transform:scaleX(0.8300);transform-origin:0 0;">54,400</div>
<div style="left:718.46708984375px;top:560.02px;font-size:12.5px;line-height:1;white-space:pre;color:#000;font-weight:normal;font-kerning:none;transform:scaleX(0.8300);transform-origin:0 0;">51,400</div>
<div style="left:788.46708984375px;top:560.02px;font-size:12.5px;line-height:1;white-space:pre;color:#000;font-weight:normal;font-kerning:none;transform:scaleX(0.8300);transform-origin:0 0;">49,200</div>
<div style="left:858.46708984375px;top:560.02px;font-size:12.5px;line-height:1;white-space:pre;color:#000;font-weight:normal;font-kerning:none;transform:scaleX(0.8300);transform-origin:0 0;">52,100</div>
<div style="left:928.46708984375px;top:560.02px;font-size:12.5px;line-height:1;white-space:pre;color:#000;font-weight:normal;font-kerning:none;transform:scaleX(0.8300);transform-origin:0 0;">47,000</div>
<div style="left:998.46708984375px;top:560.02px;font-size:12.5px;line-height:1;white-space:pre;color:#000;font-weight:normal;font-kerning:none;transform:scaleX(0.8300);transform-origin:0 0;">48,000</div>
<div style="left:1062.6970092773438px;top:560.02px;font-size:12.5px;line-height:1;white-space:pre;color:#000;font-weight:normal;font-kerning:none;transform:scaleX(0.8300);transform-origin:0 0;">578,900</div>
<div style="left:1132.46708984375px;top:560.02px;font-size:12.5px;line-height:1;white-space:pre;color:#000;font-weight:normal;font-kerning:none;transform:scaleX(0.8300);transform-origin:0 0;">48,242</div>
<div style="left:76.8px;top:595.84px;font-size:9.4px;line-height:1;white-space:pre;color:#000;font-weight:normal;font-kerning:none;transform:scaleX(0.9300);transform-origin:0 0;-webkit-text-stroke:0.25px #000;">881 Peak Dr.</div>
<div style="left:76.8px;top:607.74px;font-size:9.4px;line-height:1;white-space:pre;color:#000;font-weight:normal;font-kerning:none;transform:scaleX(0.9300);transform-origin:0 0;-webkit-text-stroke:0.25px #000;">Denver, CO 80236</div>
<div style="left:76.8px;top:619.64px;font-size:9.4px;line-height:1;white-space:pre;color:#000;font-weight:normal;font-kerning:none;transform:scaleX(0.9300);transform-origin:0 0;-webkit-text-stroke:0.25px #000;">(303) 555 - 0444</div>
<div style="left:228.46708984375px;top:596.02px;font-size:12.5px;line-height:1;white-space:pre;color:#000;font-weight:normal;font-kerning:none;transform:scaleX(0.8300);transform-origin:0 0;">47,500</div>
<div style="left:298.46708984375px;top:596.02px;font-size:12.5px;line-height:1;white-space:pre;color:#000;font-weight:normal;font-kerning:none;transform:scaleX(0.8300);transform-origin:0 0;">44,700</div>
<div style="left:368.46708984375px;top:596.02px;font-size:12.5px;line-height:1;white-space:pre;color:#000;font-weight:normal;font-kerning:none;transform:scaleX(0.8300);transform-origin:0 0;">51,700</div>
<div style="left:438.46708984375px;top:596.02px;font-size:12.5px;line-height:1;white-space:pre;color:#000;font-weight:normal;font-kerning:none;transform:scaleX(0.8300);transform-origin:0 0;">56,400</div>
<div style="left:508.46708984375005px;top:596.02px;font-size:12.5px;line-height:1;white-space:pre;color:#000;font-weight:normal;font-kerning:none;transform:scaleX(0.8300);transform-origin:0 0;">58,400</div>
<div style="left:578.46708984375px;top:596.02px;font-size:12.5px;line-height:1;white-space:pre;color:#000;font-weight:normal;font-kerning:none;transform:scaleX(0.8300);transform-origin:0 0;">59,100</div>
<div style="left:648.46708984375px;top:596.02px;font-size:12.5px;line-height:1;white-space:pre;color:#000;font-weight:normal;font-kerning:none;transform:scaleX(0.8300);transform-origin:0 0;">58,200</div>
<div style="left:718.46708984375px;top:596.02px;font-size:12.5px;line-height:1;white-space:pre;color:#000;font-weight:normal;font-kerning:none;transform:scaleX(0.8300);transform-origin:0 0;">62,100</div>
<div style="left:788.46708984375px;top:596.02px;font-size:12.5px;line-height:1;white-space:pre;color:#000;font-weight:normal;font-kerning:none;transform:scaleX(0.8300);transform-origin:0 0;">55,900</div>
<div style="left:858.46708984375px;top:596.02px;font-size:12.5px;line-height:1;white-space:pre;color:#000;font-weight:normal;font-kerning:none;transform:scaleX(0.8300);transform-origin:0 0;">57,400</div>
<div style="left:928.46708984375px;top:596.02px;font-size:12.5px;line-height:1;white-space:pre;color:#000;font-weight:normal;font-kerning:none;transform:scaleX(0.8300);transform-origin:0 0;">51,000</div>
<div style="left:998.46708984375px;top:596.02px;font-size:12.5px;line-height:1;white-space:pre;color:#000;font-weight:normal;font-kerning:none;transform:scaleX(0.8300);transform-origin:0 0;">53,000</div>
<div style="left:1062.6970092773438px;top:596.02px;font-size:12.5px;line-height:1;white-space:pre;color:#000;font-weight:normal;font-kerning:none;transform:scaleX(0.8300);transform-origin:0 0;">655,400</div>
<div style="left:1132.46708984375px;top:596.02px;font-size:12.5px;line-height:1;white-space:pre;color:#000;font-weight:normal;font-kerning:none;transform:scaleX(0.8300);transform-origin:0 0;">54,617</div>
<div style="left:76.8px;top:631.84px;font-size:9.4px;line-height:1;white-space:pre;color:#000;font-weight:normal;font-kerning:none;transform:scaleX(0.9300);transform-origin:0 0;-webkit-text-stroke:0.25px #000;">105 Barwin St.</div>
<div style="left:76.8px;top:643.74px;font-size:9.4px;line-height:1;white-space:pre;color:#000;font-weight:normal;font-kerning:none;transform:scaleX(0.9300);transform-origin:0 0;-webkit-text-stroke:0.25px #000;">Denver, CO 80290</div>
<div style="left:76.8px;top:655.64px;font-size:9.4px;line-height:1;white-space:pre;color:#000;font-weight:normal;font-kerning:none;transform:scaleX(0.9300);transform-origin:0 0;-webkit-text-stroke:0.25px #000;">(702) 555 - 6106</div>
<div style="left:228.46708984375px;top:632.02px;font-size:12.5px;line-height:1;white-space:pre;color:#000;font-weight:normal;font-kerning:none;transform:scaleX(0.8300);transform-origin:0 0;">32,100</div>
<div style="left:298.46708984375px;top:632.02px;font-size:12.5px;line-height:1;white-space:pre;color:#000;font-weight:normal;font-kerning:none;transform:scaleX(0.8300);transform-origin:0 0;">28,900</div>
<div style="left:368.46708984375px;top:632.02px;font-size:12.5px;line-height:1;white-space:pre;color:#000;font-weight:normal;font-kerning:none;transform:scaleX(0.8300);transform-origin:0 0;">35,800</div>
<div style="left:438.46708984375px;top:632.02px;font-size:12.5px;line-height:1;white-space:pre;color:#000;font-weight:normal;font-kerning:none;transform:scaleX(0.8300);transform-origin:0 0;">37,300</div>
<div style="left:508.46708984375005px;top:632.02px;font-size:12.5px;line-height:1;white-space:pre;color:#000;font-weight:normal;font-kerning:none;transform:scaleX(0.8300);transform-origin:0 0;">38,700</div>
<div style="left:578.46708984375px;top:632.02px;font-size:12.5px;line-height:1;white-space:pre;color:#000;font-weight:normal;font-kerning:none;transform:scaleX(0.8300);transform-origin:0 0;">40,300</div>
<div style="left:648.46708984375px;top:632.02px;font-size:12.5px;line-height:1;white-space:pre;color:#000;font-weight:normal;font-kerning:none;transform:scaleX(0.8300);transform-origin:0 0;">39,700</div>
<div style="left:718.46708984375px;top:632.02px;font-size:12.5px;line-height:1;white-space:pre;color:#000;font-weight:normal;font-kerning:none;transform:scaleX(0.8300);transform-origin:0 0;">39,700</div>
<div style="left:788.46708984375px;top:632.02px;font-size:12.5px;line-height:1;white-space:pre;color:#000;font-weight:normal;font-kerning:none;transform:scaleX(0.8300);transform-origin:0 0;">38,600</div>
<div style="left:858.46708984375px;top:632.02px;font-size:12.5px;line-height:1;white-space:pre;color:#000;font-weight:normal;font-kerning:none;transform:scaleX(0.8300);transform-origin:0 0;">37,600</div>
<div style="left:928.46708984375px;top:632.02px;font-size:12.5px;line-height:1;white-space:pre;color:#000;font-weight:normal;font-kerning:none;transform:scaleX(0.8300);transform-origin:0 0;">35,300</div>
<div style="left:998.46708984375px;top:632.02px;font-size:12.5px;line-height:1;white-space:pre;color:#000;font-weight:normal;font-kerning:none;transform:scaleX(0.8300);transform-origin:0 0;">38,000</div>
<div style="left:1062.6970092773438px;top:632.02px;font-size:12.5px;line-height:1;white-space:pre;color:#000;font-weight:normal;font-kerning:none;transform:scaleX(0.8300);transform-origin:0 0;">442,000</div>
<div style="left:1132.46708984375px;top:632.02px;font-size:12.5px;line-height:1;white-space:pre;color:#000;font-weight:normal;font-kerning:none;transform:scaleX(0.8300);transform-origin:0 0;">36,833</div>
<div style="left:76.8px;top:668.84px;font-size:9.4px;line-height:1;white-space:pre;color:#000;font-weight:normal;font-kerning:none;transform:scaleX(0.9300);transform-origin:0 0;-webkit-text-stroke:0.25px #000;">5 Meggett Dr.</div>
<div style="left:76.8px;top:680.74px;font-size:9.4px;line-height:1;white-space:pre;color:#000;font-weight:normal;font-kerning:none;transform:scaleX(0.9300);transform-origin:0 0;-webkit-text-stroke:0.25px #000;">Boulder, CO 80305</div>
<div style="left:76.8px;top:692.64px;font-size:9.4px;line-height:1;white-space:pre;color:#000;font-weight:normal;font-kerning:none;transform:scaleX(0.9300);transform-origin:0 0;-webkit-text-stroke:0.25px #000;">(303) 555 - 8103</div>
<div style="left:228.46708984375px;top:669.02px;font-size:12.5px;line-height:1;white-space:pre;color:#000;font-weight:normal;font-kerning:none;transform:scaleX(0.8300);transform-origin:0 0;">49,700</div>
<div style="left:298.46708984375px;top:669.02px;font-size:12.5px;line-height:1;white-space:pre;color:#000;font-weight:normal;font-kerning:none;transform:scaleX(0.8300);transform-origin:0 0;">45,900</div>
<div style="left:368.46708984375px;top:669.02px;font-size:12.5px;line-height:1;white-space:pre;color:#000;font-weight:normal;font-kerning:none;transform:scaleX(0.8300);transform-origin:0 0;">56,400</div>
<div style="left:438.46708984375px;top:669.02px;font-size:12.5px;line-height:1;white-space:pre;color:#000;font-weight:normal;font-kerning:none;transform:scaleX(0.8300);transform-origin:0 0;">55,500</div>
<div style="left:508.46708984375005px;top:669.02px;font-size:12.5px;line-height:1;white-space:pre;color:#000;font-weight:normal;font-kerning:none;transform:scaleX(0.8300);transform-origin:0 0;">58,600</div>
<div style="left:578.46708984375px;top:669.02px;font-size:12.5px;line-height:1;white-space:pre;color:#000;font-weight:normal;font-kerning:none;transform:scaleX(0.8300);transform-origin:0 0;">57,100</div>
<div style="left:648.46708984375px;top:669.02px;font-size:12.5px;line-height:1;white-space:pre;color:#000;font-weight:normal;font-kerning:none;transform:scaleX(0.8300);transform-origin:0 0;">61,900</div>
<div style="left:718.46708984375px;top:669.02px;font-size:12.5px;line-height:1;white-space:pre;color:#000;font-weight:normal;font-kerning:none;transform:scaleX(0.8300);transform-origin:0 0;">61,100</div>
<div style="left:788.46708984375px;top:669.02px;font-size:12.5px;line-height:1;white-space:pre;color:#000;font-weight:normal;font-kerning:none;transform:scaleX(0.8300);transform-origin:0 0;">58,800</div>
<div style="left:858.46708984375px;top:669.02px;font-size:12.5px;line-height:1;white-space:pre;color:#000;font-weight:normal;font-kerning:none;transform:scaleX(0.8300);transform-origin:0 0;">60,800</div>
<div style="left:928.46708984375px;top:669.02px;font-size:12.5px;line-height:1;white-space:pre;color:#000;font-weight:normal;font-kerning:none;transform:scaleX(0.8300);transform-origin:0 0;">53,000</div>
<div style="left:998.46708984375px;top:669.02px;font-size:12.5px;line-height:1;white-space:pre;color:#000;font-weight:normal;font-kerning:none;transform:scaleX(0.8300);transform-origin:0 0;">57,000</div>
<div style="left:1062.6970092773438px;top:669.02px;font-size:12.5px;line-height:1;white-space:pre;color:#000;font-weight:normal;font-kerning:none;transform:scaleX(0.8300);transform-origin:0 0;">675,800</div>
<div style="left:1132.46708984375px;top:669.02px;font-size:12.5px;line-height:1;white-space:pre;color:#000;font-weight:normal;font-kerning:none;transform:scaleX(0.8300);transform-origin:0 0;">56,317</div>
<div style="left:70.8px;top:704.54px;font-size:12px;line-height:1;white-space:pre;color:#000;font-weight:normal;font-kerning:none;transform:scaleX(0.9930);transform-origin:0 0;">TOTAL</div>
<div style="left:222.69700927734374px;top:704.62px;font-size:12.5px;line-height:1;white-space:pre;color:#000;font-weight:normal;font-kerning:none;transform:scaleX(0.8300);transform-origin:0 0;">710,900</div>
<div style="left:292.69700927734374px;top:704.62px;font-size:12.5px;line-height:1;white-space:pre;color:#000;font-weight:normal;font-kerning:none;transform:scaleX(0.8300);transform-origin:0 0;">648,900</div>
<div style="left:362.69700927734374px;top:704.62px;font-size:12.5px;line-height:1;white-space:pre;color:#000;font-weight:normal;font-kerning:none;transform:scaleX(0.8300);transform-origin:0 0;">795,500</div>
<div style="left:432.69700927734374px;top:704.62px;font-size:12.5px;line-height:1;white-space:pre;color:#000;font-weight:normal;font-kerning:none;transform:scaleX(0.8300);transform-origin:0 0;">820,000</div>
<div style="left:502.6970092773438px;top:704.62px;font-size:12.5px;line-height:1;white-space:pre;color:#000;font-weight:normal;font-kerning:none;transform:scaleX(0.8300);transform-origin:0 0;">861,600</div>
<div style="left:572.6970092773438px;top:704.62px;font-size:12.5px;line-height:1;white-space:pre;color:#000;font-weight:normal;font-kerning:none;transform:scaleX(0.8300);transform-origin:0 0;">872,900</div>
<div style="left:642.6970092773438px;top:704.62px;font-size:12.5px;line-height:1;white-space:pre;color:#000;font-weight:normal;font-kerning:none;transform:scaleX(0.8300);transform-origin:0 0;">903,000</div>
<div style="left:712.6970092773438px;top:704.62px;font-size:12.5px;line-height:1;white-space:pre;color:#000;font-weight:normal;font-kerning:none;transform:scaleX(0.8300);transform-origin:0 0;">920,000</div>
<div style="left:782.6970092773438px;top:704.62px;font-size:12.5px;line-height:1;white-space:pre;color:#000;font-weight:normal;font-kerning:none;transform:scaleX(0.8300);transform-origin:0 0;">859,800</div>
<div style="left:852.6970092773438px;top:704.62px;font-size:12.5px;line-height:1;white-space:pre;color:#000;font-weight:normal;font-kerning:none;transform:scaleX(0.8300);transform-origin:0 0;">866,200</div>
<div style="left:922.6970092773438px;top:704.62px;font-size:12.5px;line-height:1;white-space:pre;color:#000;font-weight:normal;font-kerning:none;transform:scaleX(0.8300);transform-origin:0 0;">788,900</div>
<div style="left:992.6970092773438px;top:704.62px;font-size:12.5px;line-height:1;white-space:pre;color:#000;font-weight:normal;font-kerning:none;transform:scaleX(0.8300);transform-origin:0 0;">833,100</div>
<div style="left:1054.0444213867188px;top:704.62px;font-size:12.5px;line-height:1;white-space:pre;color:#000;font-weight:normal;font-kerning:none;transform:scaleX(0.8300);transform-origin:0 0;">9,880,800</div>
<div style="left:1126.6970092773438px;top:704.62px;font-size:12.5px;line-height:1;white-space:pre;color:#000;font-weight:normal;font-kerning:none;transform:scaleX(0.8300);transform-origin:0 0;">823,400</div>
<svg style="position:absolute;left:24px;top:250px;" width="43" height="454" viewBox="24 250 43 454"><defs><clipPath id="stc"><rect x="24" y="252.5" width="43" height="454"/></clipPath></defs><g clip-path="url(#stc)" font-family="Liberation Sans" font-weight="bold" font-size="12" fill="#fff5d6"><text transform="translate(49.3 303.6) rotate(-90)">Washington</text><text transform="translate(49.3 396.0) rotate(-90)" text-anchor="middle">Oregon</text><text transform="translate(49.3 495.0) rotate(-90)" text-anchor="middle">Idaho</text><text transform="translate(49.3 557.5) rotate(-90)" text-anchor="middle">Nevada</text><text transform="translate(49.3 648.5) rotate(-90)" text-anchor="middle">Colorado</text></g></svg>
<div style="left:1361px;top:629px;width:50px;height:39px;background:transparent;box-sizing:border-box;border:2px solid #217346;"></div>
<div style="left:1408px;top:665px;width:5px;height:5px;background:#217346;outline:1px solid #fff;"></div>
<svg style="position:absolute;left:1268px;top:664px;" width="84" height="84" viewBox="0 0 84 84"><circle cx="41.5" cy="41.5" r="34.5" fill="none" stroke="#f4ef3a" stroke-width="3.6"/><circle cx="41.5" cy="41.5" r="37" fill="none" stroke="#f8f5a0" stroke-width="1.2" opacity="0.6"/></svg>
<svg style="position:absolute;left:1301px;top:697px;" width="17" height="17" viewBox="0 0 17 17"><path d="M5.5 1.5 h5 v4 h4 v5 h-4 v4 h-5 v-4 h-4 v-5 h4z" fill="#fff" stroke="#000" stroke-width="1.6"/></svg>
<div style="left:1571px;top:233px;width:25px;height:563px;background:#e6e6e6;"></div>
<div style="left:1574px;top:240px;width:18px;height:17px;background:#fff;box-sizing:border-box;border:1px solid #d8d8d8;"></div>
<svg style="position:absolute;left:1578px;top:245px;" width="10" height="6" viewBox="0 0 10 6"><path d="M0.5 5.5 L5 0.5 L9.5 5.5z" fill="#666"/></svg>
<div style="left:1574px;top:258px;width:19px;height:537px;background:#dedede;"></div>
<div style="left:1574px;top:598px;width:19px;height:180px;background:#fff;box-sizing:border-box;border:1px solid #c8c8c8;"></div>
<div style="left:1574px;top:778px;width:19px;height:18px;background:#fff;box-sizing:border-box;border:1px solid #d8d8d8;"></div>
<svg style="position:absolute;left:1578px;top:784px;" width="10" height="6" viewBox="0 0 10 6"><path d="M0.5 0.5 L5 5.5 L9.5 0.5z" fill="#666"/></svg>
<div style="left:0px;top:796px;width:1596px;height:1px;background:#a8a8a8;"></div>
<div style="left:0px;top:797px;width:1596px;height:28px;background:#e6e6e6;"></div>
<svg style="position:absolute;left:21px;top:803px;" width="10" height="14" viewBox="0 0 10 14"><path d="M8 1 L2 7 L8 13z" fill="#c4c4c4"/></svg>
<svg style="position:absolute;left:50px;top:803px;" width="10" height="14" viewBox="0 0 10 14"><path d="M2 1 L8 7 L2 13z" fill="#c4c4c4"/></svg>
<div style="left:99px;top:797px;width:1px;height:25px;background:#b0b0b0;"></div>
<div style="left:100px;top:798px;width:146px;height:24px;background:#f00000;"></div>
<div style="left:101px;top:798px;width:1px;height:24px;background:#c00000;"></div>
<div style="left:113px;top:798.83px;font-size:16.5px;line-height:1;white-space:pre;color:#fff4f4;font-weight:normal;font-kerning:none;transform:scaleX(1.0687);transform-origin:0 0;">Documentation</div>
<div style="left:246px;top:797px;width:125px;height:25px;background:#ffffff;"></div>
<div style="left:370px;top:797px;width:1px;height:25px;background:#c0c0c0;"></div>
<div style="left:247px;top:820px;width:123px;height:2px;background:#217346;"></div>
<div style="left:259px;top:800.45px;font-size:16px;line-height:1;white-space:pre;color:#217346;font-weight:bold;font-kerning:none;transform:scaleX(1.0162);transform-origin:0 0;">Sales Report</div>
<svg style="position:absolute;left:402px;top:799px;" width="24" height="24" viewBox="0 0 24 24"><circle cx="11.6" cy="11.7" r="9.6" fill="none" stroke="#666" stroke-width="1.3"/><path d="M11.6 6.5 v10.5 M6.4 11.7 h10.5" stroke="#666" stroke-width="1.5"/></svg>
<svg style="position:absolute;left:951px;top:803px;" width="6" height="15" viewBox="0 0 6 15"><rect x="1.5" y="0.5" width="2.5" height="2.5" fill="#aaa"/><rect x="1.5" y="6" width="2.5" height="2.5" fill="#aaa"/><rect x="1.5" y="11.5" width="2.5" height="2.5" fill="#aaa"/></svg>
<div style="left:971px;top:801px;width:600px;height:19px;background:#dedede;"></div>
<div style="left:971px;top:801px;width:20px;height:19px;background:#fff;box-sizing:border-box;border:1px solid #d0d0d0;"></div>
<svg style="position:absolute;left:976px;top:806px;" width="7" height="10" viewBox="0 0 7 10"><path d="M6 0.5 L0.5 5 L6 9.5z" fill="#555"/></svg>
<div style="left:990px;top:801px;width:536px;height:19px;background:#fff;box-sizing:border-box;border:1px solid #c8c8c8;"></div>
<div style="left:1552px;top:801px;width:19px;height:19px;background:#fff;box-sizing:border-box;border:1px solid #d0d0d0;"></div>
<svg style="position:absolute;left:1558px;top:806px;" width="7" height="10" viewBox="0 0 7 10"><path d="M0.5 0.5 L6 5 L0.5 9.5z" fill="#555"/></svg>
<div style="left:0px;top:825px;width:1596px;height:1px;background:#d6d6d6;"></div>
<div style="left:0px;top:826px;width:1596px;height:26px;background:#f1f1f1;"></div>
<div style="left:3.3px;top:831.10px;font-size:15px;line-height:1;white-space:pre;color:#555;font-weight:normal;font-kerning:none;transform:scaleX(0.8141);transform-origin:0 0;">Ready</div>
<div style="left:1264px;top:826px;width:42px;height:25px;background:#d4d4d4;"></div>
<svg style="position:absolute;left:1277px;top:830px;" width="16" height="15" viewBox="0 0 16 15"><rect x="1.5" y="1.5" width="12" height="12" fill="none" stroke="#666" stroke-width="1"/><path d="M1.5 5.5 h12 M1.5 9.5 h12 M5.5 1.5 v12 M9.5 1.5 v12" stroke="#666" stroke-width="1"/></svg>
<svg style="position:absolute;left:1317px;top:830px;" width="17" height="15" viewBox="0 0 17 15"><rect x="1.5" y="1.5" width="14" height="12" fill="none" stroke="#666" stroke-width="1"/><rect x="4.5" y="3.5" width="8" height="8" fill="none" stroke="#666" stroke-width="1"/><path d="M6 6 h5 M6 8 h5" stroke="#777" stroke-width="0.8"/></svg>
<svg style="position:absolute;left:1358px;top:830px;" width="17" height="15" viewBox="0 0 17 15"><path d="M1.5 1.5 h14 v12 h-14z M6.5 1.5 v6 h-5 M9.5 1.5 v6 h6" fill="none" stroke="#666" stroke-width="1.2"/></svg>
<div style="left:1392px;top:837px;width:10px;height:2px;background:#555;"></div>
<div style="left:1406px;top:838px;width:125px;height:1px;background:#9a9a9a;"></div>
<div style="left:1468px;top:835px;width:1px;height:6px;background:#aaa;"></div>
<div style="left:1440px;top:831px;width:5px;height:14px;background:#606060;"></div>
<svg style="position:absolute;left:1534px;top:831px;" width="14" height="14" viewBox="0 0 14 14"><path d="M7 1 v12 M1 7 h12" stroke="#555" stroke-width="2.2"/></svg>
<div style="left:1562px;top:831.57px;font-size:13.5px;line-height:1;white-space:pre;color:#555;font-weight:normal;font-kerning:none;transform:scaleX(0.9252);transform-origin:0 0;">60%</div>
<div style="left:0;top:852px;width:1596px;height:28px;background:linear-gradient(90deg,#a9cdf0 0%,#b8d8f5 30%,#add0f2 45%,#bcdaf6 60%,#a9ccee 80%,#a5c8ea 100%);"></div>
<div style="left:0px;top:852px;width:1596px;height:1px;background:#3a3a3a;"></div>
<div style="left:0px;top:853px;width:208px;height:27px;background:#0d0f12;"></div>
<div style="left:1345px;top:853px;width:251px;height:27px;background:linear-gradient(90deg,rgba(14,16,20,0) 0px,#101216 18px,#0d0f12 100%);"></div>
<svg style="position:absolute;left:4px;top:853px;" width="50" height="27" viewBox="0 0 50 27"><defs><radialGradient id="orb" cx="50%" cy="35%" r="60%"><stop offset="0" stop-color="#8fd0f2"/><stop offset="0.6" stop-color="#2a78b8"/><stop offset="1" stop-color="#0c3560"/></radialGradient></defs>
<circle cx="25" cy="24" r="21" fill="url(#orb)" stroke="#5a7a9a" stroke-width="1"/>
<path d="M14 9 q5 -3 10 0 v9 q-5 -3 -10 0z" fill="#f05a28"/><path d="M26 10 q5 -3 10 0 v9 q-5 -3 -10 0z" fill="#7cbb2a"/>
<path d="M14 20 q5 -3 10 0 v9 q-5 -3 -10 0z" fill="#1fa3e8"/><path d="M26 21 q5 -3 10 0 v9 q-5 -3 -10 0z" fill="#fbbc09"/></svg>
<svg style="position:absolute;left:82px;top:855px;" width="40" height="25" viewBox="0 0 40 25"><path d="M7 26 a13 12 0 1 1 26 -6 h-20 a8 7 0 0 0 15 3" fill="none" stroke="#45b4ea" stroke-width="6.5"/>
<path d="M3 22 q15 -25 33 -19" fill="none" stroke="#f3b61f" stroke-width="3"/></svg>
<svg style="position:absolute;left:150px;top:861px;" width="36" height="19" viewBox="0 0 36 19"><rect x="2" y="1" width="32" height="20" fill="#8fc1e4" stroke="#5a93c0"/>
<path d="M10 4 l14 8 l-14 8z" fill="#f07c22"/><path d="M13 8 l7 4 l-7 4z" fill="#fff"/></svg>
<div style="left:208px;top:853px;width:67px;height:27px;background:linear-gradient(90deg,#5a5a5a 0%,#cfd9e4 40%,#dfe9f4 100%);box-sizing:border-box;border:1px solid #8aa8c8;border-bottom:none;border-radius:3px 3px 0 0;"></div>
<div style="left:277px;top:853px;width:67px;height:27px;background:linear-gradient(180deg,#e8f2fb,#c4dcf2);box-sizing:border-box;border:1px solid #8aa8c8;border-bottom:none;border-radius:3px 3px 0 0;"></div>
<div style="left:345px;top:853px;width:72px;height:27px;background:linear-gradient(180deg,#e8f2fb,#c4dcf2);box-sizing:border-box;border:1px solid #8aa8c8;border-bottom:none;border-radius:3px 3px 0 0;"></div>
<div style="left:418px;top:853px;width:67px;height:27px;background:linear-gradient(180deg,#e8f2fb,#c4dcf2);box-sizing:border-box;border:1px solid #8aa8c8;border-bottom:none;border-radius:3px 3px 0 0;"></div>
<div style="left:487px;top:853px;width:67px;height:27px;background:linear-gradient(180deg,#fbe9a8,#f1d060);box-sizing:border-box;border:1px solid #8aa8c8;border-bottom:none;border-radius:3px 3px 0 0;"></div>
<svg style="position:absolute;left:222px;top:856px;" width="40" height="24" viewBox="0 0 40 24"><circle cx="20" cy="22" r="17" fill="#f7a823"/><path d="M6 20 a15 15 0 0 1 22 -14 q-8 2 -6 8 q-6 -3 -10 3 z" fill="#e8322f"/>
<circle cx="21" cy="22" r="9" fill="#3f6ad8"/><path d="M10 12 q6 6 2 14 q5 -3 10 -1" fill="#f05a28"/></svg>
<svg style="position:absolute;left:291px;top:856px;" width="40" height="24" viewBox="0 0 40 24"><circle cx="19.5" cy="19.5" r="17.5" fill="#db4437"/>
<path d="M19.5 19.5 L37 19.5 A17.5 17.5 0 0 1 11 34.5z" fill="#f4c20d"/><path d="M19.5 19.5 L11 34.5 A17.5 17.5 0 0 1 2 19.5z" fill="#0f9d58"/>
<circle cx="19.5" cy="19.5" r="8" fill="#fff"/><circle cx="19.5" cy="19.5" r="6" fill="#4285f4"/></svg>
<svg style="position:absolute;left:361px;top:856px;" width="40" height="24" viewBox="0 0 40 24"><rect x="2" y="4" width="36" height="22" fill="#f3d68a" stroke="#c9a850"/><rect x="5" y="1" width="16" height="6" fill="#f6e3a8" stroke="#c9a850"/>
<rect x="3" y="9" width="34" height="4" fill="#fff5d0"/><rect x="10" y="3" width="3" height="3" fill="#d05a3a"/><rect x="24" y="8" width="3" height="3" fill="#777"/></svg>
<svg style="position:absolute;left:431px;top:857px;" width="38" height="23" viewBox="0 0 38 23"><rect x="16" y="3" width="20" height="22" fill="#fff" stroke="#1d6f42" stroke-width="1.5"/>
<path d="M20 9 h13 M20 14 h13 M20 19 h13 M26 5 v20" stroke="#1d6f42" stroke-width="1.2"/>
<path d="M1 4 L21 1 V25 L1 23z" fill="#1d6f42"/><text x="5" y="21" font-size="14" font-weight="bold" fill="#fff" font-family="Liberation Sans">X</text></svg>
<svg style="position:absolute;left:503px;top:859px;" width="38" height="21" viewBox="0 0 38 21"><rect x="2.5" y="2.5" width="33" height="22" fill="#f6df88" stroke="#111" stroke-width="2.5" stroke-dasharray="3 2.5"/></svg>
<svg style="position:absolute;left:1318px;top:871px;" width="12" height="8" viewBox="0 0 12 8"><path d="M1 7 L6 1 L11 7z" fill="#e8eef5"/></svg>
<svg style="position:absolute;left:1343px;top:864px;" width="22" height="20" viewBox="0 0 22 20"><path d="M4 18 a5 5 0 0 1 2 -9 a6 6 0 0 1 11 0 a5 5 0 0 1 2 9z" fill="#f0f0f0" stroke="#aaa"/></svg>
<svg style="position:absolute;left:1373px;top:863px;" width="24" height="22" viewBox="0 0 24 22"><path d="M3 20 a6 6 0 0 1 3 -11 a7 7 0 0 1 13 1 a5 5 0 0 1 2 10z" fill="#2e8ad8" stroke="#9cc8f0"/></svg>
<svg style="position:absolute;left:1404px;top:862px;" width="22" height="22" viewBox="0 0 22 22"><path d="M6 3 l5 3 l-5 3 l-5 -3z M16 3 l5 3 l-5 3 l-5 -3z M6 10 l5 3 l-5 3 l-5 -3z M16 10 l5 3 l-5 3 l-5 -3z" fill="#eaf2fb"/><circle cx="15" cy="19" r="3" fill="#f3c74a"/></svg>
<svg style="position:absolute;left:1434px;top:862px;" width="24" height="22" viewBox="0 0 24 22"><rect x="2" y="4" width="10" height="18" fill="#300" stroke="#ddd"/><rect x="3" y="12" width="8" height="10" fill="#d81818"/><path d="M15 8 v5 M19 8 v5 M13 13 h8 v3 a4 4 0 0 1 -8 0z M17 19 v3" stroke="#fff" fill="#fff"/></svg>
<svg style="position:absolute;left:1466px;top:865px;" width="18" height="18" viewBox="0 0 18 18"><path d="M2 17 v-3 M6 17 v-6 M10 17 v-9 M14 17 v-13" stroke="#fff" stroke-width="2"/></svg>
<div style="left:1512px;top:859.55px;font-size:14px;line-height:1;white-space:pre;color:#ffffff;font-weight:normal;font-kerning:none;transform:scaleX(0.9667);transform-origin:0 0;">3:30 PM</div>
<div style="left:1582px;top:853px;width:1px;height:27px;background:#4a5058;"></div>
<svg style="position:absolute;left:550px;top:852px;" width="300" height="16" viewBox="0 0 300 16"><defs><filter id="bl" x="-20%" y="-50%" width="140%" height="200%"><feGaussianBlur stdDeviation="2"/></filter></defs>
<g filter="url(#bl)" fill="#3d4a56" opacity="0.75">
<ellipse cx="18" cy="3" rx="11" ry="3.5" opacity="0.7"/>
<ellipse cx="77" cy="4" rx="37" ry="4.5"/>
<ellipse cx="141" cy="4" rx="19" ry="5"/>
<ellipse cx="183" cy="3.5" rx="14" ry="4"/>
<ellipse cx="219" cy="3" rx="14" ry="3.5" opacity="0.8"/>
<ellipse cx="266" cy="2.5" rx="13" ry="2.5" opacity="0.3"/>
</g></svg>
</body></html>
